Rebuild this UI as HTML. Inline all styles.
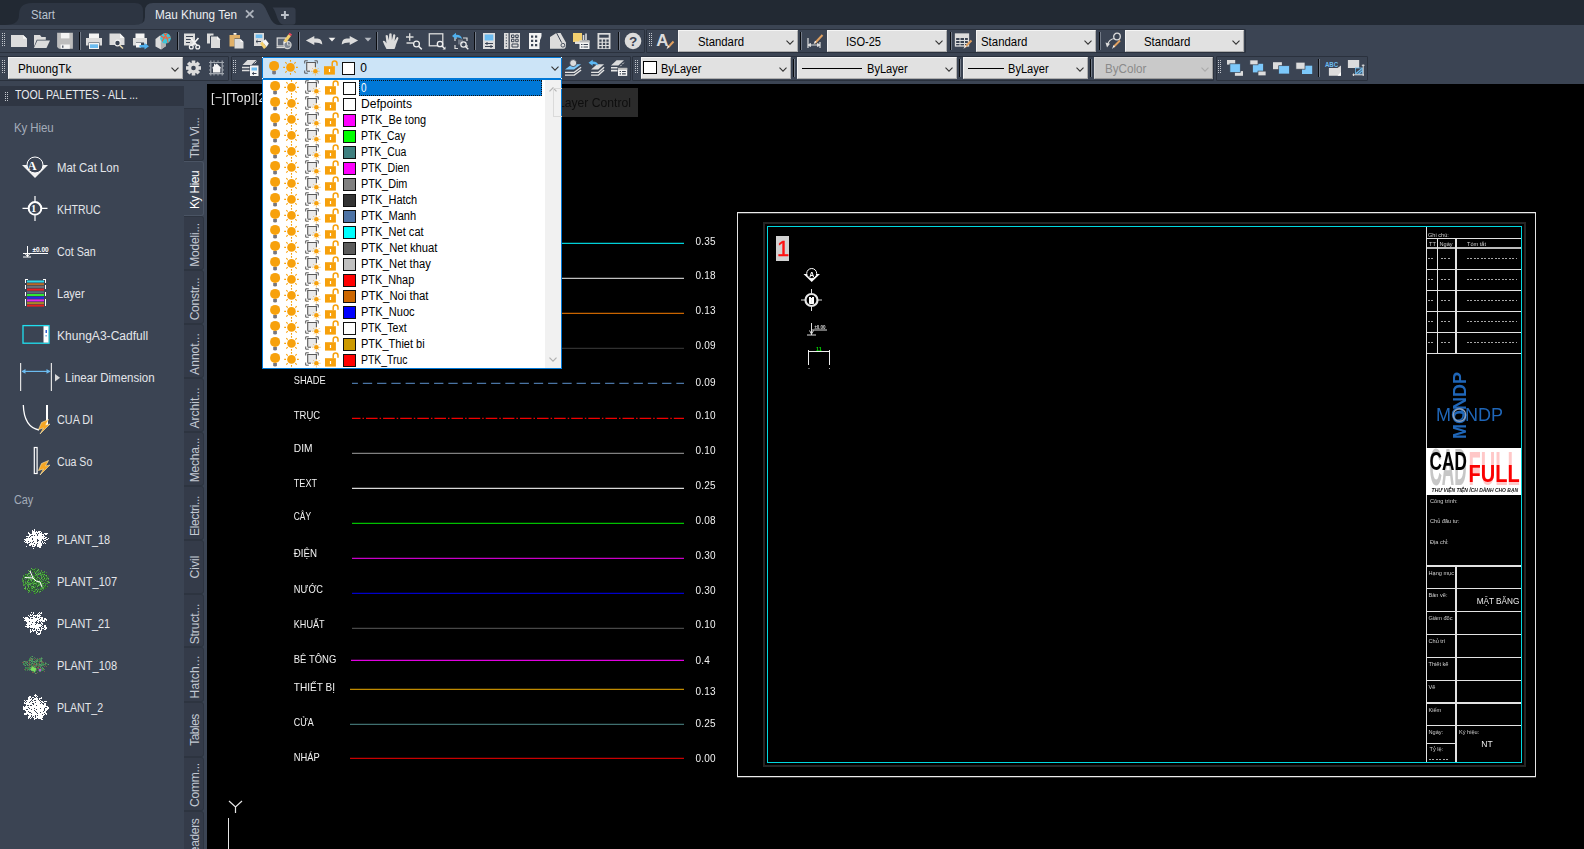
<!DOCTYPE html>
<html><head><meta charset="utf-8"><title>Mau Khung Ten</title>
<style>
*{box-sizing:border-box;margin:0;padding:0}
html,body{width:1584px;height:849px;overflow:hidden;background:#000;font-family:"Liberation Sans",sans-serif;font-size:12px;color:#e6e6e6}
.abs{position:absolute}
#tabbar{position:absolute;left:0;top:0;width:1584px;height:25px;background:#222933}
#tb{position:absolute;left:0;top:25px;width:1584px;height:59px;background:#3b4453}
.tab{position:absolute;top:3px;height:23px;border-radius:9px 9px 0 0;font-size:12px;line-height:23px;white-space:nowrap}
.grp{position:absolute;border:1px solid #2a313d;border-radius:1px}
.ic{position:absolute;width:18px;height:18px;overflow:visible}
.sep{position:absolute;background:#0a0c10;border-right:1px solid #737b88}
.grip{position:absolute;width:3px;height:15px;background-image:radial-gradient(circle,#c8ccd2 0.6px,transparent 0.9px);background-size:2px 2px}
.combo{position:absolute;height:22px;background:#e1e1e1;color:#000;font-size:12px;line-height:22px;white-space:nowrap;border:1px solid #f4f4f4;border-right-color:#adadad;border-bottom-color:#adadad}
.combo .chev{position:absolute;right:3px;top:8.5px;width:8px;height:5px}
#pal{position:absolute;left:0;top:84px;width:207px;height:765px;background:#3b4453}
#paltitle{position:absolute;left:0;top:2px;width:184px;height:20px;background:#2f3643;color:#e8eaee;font-size:12px;line-height:20px}
.pitem{position:absolute;left:56px;font-size:12px;color:#e4e6ea;white-space:nowrap;line-height:14px;margin-top:0.6px}
.phead{position:absolute;left:14px;font-size:12px;color:#a3acb9;line-height:14px;margin-top:1px;letter-spacing:-0.1px}
.vtab{position:absolute;left:184px;width:20px;background:#343b49;border-radius:0 3px 3px 0;border:1px solid #2d3440;border-left:none}
.vtab span{position:absolute;left:50%;top:50%;transform:translate(-50%,-50%) rotate(-90deg);white-space:nowrap;font-size:12px;color:#c3c9d3;margin-left:1.2px}
.vtab.act{background:#3b4453;border-color:#4a5464}
.vtab.act span{color:#fff}
#dd{position:absolute;left:262px;top:79px;width:300px;height:290px;background:#fff;border:1px solid #0078d7}
.lrow{position:absolute;left:0;width:280px;height:16px}
.lrow .t{position:absolute;left:98px;top:0;line-height:16px;font-size:12px;color:#000;white-space:nowrap}
.sw{position:absolute;left:80px;top:2px;width:13px;height:12.5px;border:1px solid #101010}
</style></head><body>

<div id="tabbar">
<svg class="abs" style="left:0;top:0" width="320" height="26" viewBox="0 0 320 26"><path d="M0 25 C12 25 19 24 19 15 C19 8 22 3 32 3 H135 Q143 3 143 11 V19 Q143 25 138 25 Z" fill="#2d3542"/><path d="M134 25 Q145 25 145 17 V11 Q145 3 153 3 H259 C268 3 268 25 279 25 Z" fill="#3b4453"/><path d="M272.5 7.6 H292.6 Q295.6 7.6 295.6 10.6 V21.7 Q295.6 24.7 292.6 24.7 H284 C277 24.7 277 12 272.5 7.6 Z" fill="#343c4a"/><path d="M246 10.4 L253.4 17.6 M253.4 10.4 L246 17.6" stroke="#adb3bc" stroke-width="1.9" fill="none"/><path d="M284.9 10.9 V18.9 M281 14.9 H288.8" stroke="#bcc1c9" stroke-width="2" fill="none"/></svg>
<div class="tab" style="left:31.4px;top:4px;color:#bcc4cf"><span style="display:inline-block;transform-origin:0 50%;transform:scaleX(0.939);white-space:nowrap">Start</span></div>
<div class="tab" style="left:154.5px;top:4px;color:#eceef1"><span style="display:inline-block;transform-origin:0 50%;transform:scaleX(0.979);white-space:nowrap">Mau Khung Ten</span></div>
</div>
<div id="tb">
<div class="grp" style="left:-1px;top:4px;width:646px;height:24px"></div>
<svg class="abs" style="left:2px;top:8px" width="3" height="13" viewBox="0 0 3 13" fill="#c4c8ce" shape-rendering="crispEdges"><rect x="0" y="0" width="1" height="1"/><rect x="2" y="0" width="1" height="1"/><rect x="0" y="2" width="1" height="1"/><rect x="2" y="2" width="1" height="1"/><rect x="0" y="4" width="1" height="1"/><rect x="2" y="4" width="1" height="1"/><rect x="0" y="6" width="1" height="1"/><rect x="2" y="6" width="1" height="1"/><rect x="0" y="8" width="1" height="1"/><rect x="2" y="8" width="1" height="1"/><rect x="0" y="10" width="1" height="1"/><rect x="2" y="10" width="1" height="1"/><rect x="0" y="12" width="1" height="1"/><rect x="2" y="12" width="1" height="1"/></svg>
<svg class="ic" style="left:10px;top:7px" viewBox="0 0 18 18"><path d="M1 3 H13.2 L17 6.8 V15 H1 Z" fill="#dcdcdc"/><path d="M13.2 3 V6.8 H17 Z" fill="#f8f8f8"/></svg>
<svg class="ic" style="left:33px;top:7px" viewBox="0 0 18 18"><path d="M1 3 H7 L8.5 5 H12.8 V7.8 H3.8 L1 14.5 Z" fill="#dcdcdc"/><path d="M4.3 8.5 H17 L13.5 15.9 H0.9 Z" fill="#dcdcdc"/></svg>
<svg class="ic" style="left:56px;top:7px" viewBox="0 0 18 18"><path d="M1.1 0.8 H16.9 V16.8 H3 L1.1 15 Z" fill="#bdbdbd"/><rect x="4.9" y="1" width="8.5" height="5.4" fill="#f4f4f4"/><rect x="4.6" y="12.5" width="9.2" height="4.3" fill="#f4f4f4"/><rect x="6.2" y="13.5" width="1.2" height="2.3" fill="#3b4453"/></svg>
<div class="sep" style="left:79px;top:7px;height:18px;width:2px"></div>
<svg class="ic" style="left:85px;top:7px" viewBox="0 0 18 18"><rect x="4" y="1.5" width="10" height="5" fill="#f4f4f4"/><path d="M1 6 H17 V13.5 H14.5 V10.5 H3.5 V13.5 H1 Z" fill="#dcdcdc"/><rect x="4" y="11" width="10" height="6" fill="#f4f4f4"/><rect x="5" y="12.3" width="8" height="3.7" fill="#6cbcf0"/></svg>
<svg class="ic" style="left:108px;top:7px" viewBox="0 0 18 18"><path d="M1.5 1.5 H12 L16.5 6 V13 H1.5 Z" fill="#dcdcdc"/><path d="M12 1.5 V6 H16.5 Z" fill="#f6f6f6"/><circle cx="9.5" cy="11" r="2.8" fill="#3b4453" stroke="#f0f0f0" stroke-width="1.2"/><path d="M11.7 13.2 L15 16.6" stroke="#e8d9b0" stroke-width="1.5"/></svg>
<svg class="ic" style="left:131px;top:7px" viewBox="0 0 18 18"><rect x="4.5" y="1.5" width="9" height="5" fill="#f4f4f4"/><path d="M2 6 H16 V12.5 H13 V10.5 H5 V13.5 H2 Z" fill="#dcdcdc"/><rect x="5" y="11" width="5" height="4.5" fill="#f4f4f4"/><path d="M8.5 13 H13.5 V11 L18 14.2 L13.5 17.4 V15.4 H8.5 Z" fill="#4fb0ee"/></svg>
<svg class="ic" style="left:154px;top:7px" viewBox="0 0 18 18"><path d="M1.5 7 L6 3.5 L12 6 V14 L7 17.5 L1.5 14.5 Z" fill="#dcdcdc"/><path d="M6.8 10.5 L12 7.5 V14 L7 17.5 Z" fill="#b0b0b0"/><circle cx="11.5" cy="6.3" r="5.3" fill="#3ec6d8"/><path d="M7 4 Q11.5 8 16.5 5 M8 9.5 Q11 4 13 1.4 M10 1.4 Q14 6 14 11" stroke="#f0623e" stroke-width="1.1" fill="none"/></svg>
<div class="sep" style="left:177px;top:7px;height:18px;width:2px"></div>
<svg class="ic" style="left:183px;top:7px" viewBox="0 0 18 18"><rect x="1" y="1.5" width="11" height="12" fill="#dcdcdc"/><path d="M3 4.5 H10 M3 7.5 H8 M3 10.5 H7" stroke="#3b4453" stroke-width="1.2"/><path d="M7.5 6 L14.5 14 M15.5 6 L8.5 14" stroke="#f4f4f4" stroke-width="1.6"/><circle cx="8.3" cy="15" r="1.9" fill="none" stroke="#f4f4f4" stroke-width="1.3"/><circle cx="14.7" cy="15" r="1.9" fill="none" stroke="#f4f4f4" stroke-width="1.3"/></svg>
<svg class="ic" style="left:205px;top:7px" viewBox="0 0 18 18"><path d="M2 1.5 H8.5 V11.5 H2 Z" fill="#dcdcdc"/><path d="M5.5 4 H12 L15.5 7.5 V16.5 H5.5 Z" fill="#dcdcdc" stroke="#3b4453" stroke-width="1"/><path d="M12 4 V7.5 H15.5 Z" fill="#f8f8f8"/></svg>
<svg class="ic" style="left:228px;top:7px" viewBox="0 0 18 18"><path d="M1.5 3 H5.5 Q7 0.5 8.5 3 H12 V6.5 H6.5 V14.5 H1.5 Z" fill="#e0b068"/><path d="M6.5 7 H12.5 L15.5 10 V16.5 H6.5 Z" fill="#dcdcdc"/><path d="M12.5 7 V10 H15.5 Z" fill="#f8f8f8"/><rect x="5.5" y="1" width="3" height="1.6" fill="#f4f4f4"/></svg>
<svg class="ic" style="left:252px;top:7px" viewBox="0 0 18 18"><rect x="2" y="1" width="10" height="13" fill="#dcdcdc"/><rect x="3.7" y="2.5" width="6.6" height="3.6" fill="#6cbcf0"/><path d="M4 9.5 H9 M4 9.5 l1.6 -1.4 M4 9.5 l1.6 1.4" stroke="#3b4453" stroke-width="1"/><path d="M8 11.5 L10.5 9.5 L14.5 15 L12 17 Z" fill="#f3cf6e"/><path d="M10.5 9.5 L13.5 7.2 L16.8 11.5 L14.5 15 Z" fill="#f6f6f6"/></svg>
<svg class="ic" style="left:275px;top:7px" viewBox="0 0 18 18"><path d="M1.5 15.5 H12" stroke="#dcdcdc" stroke-width="1.3"/><rect x="2.2" y="6" width="8.5" height="8" fill="#5a6270" stroke="#dcdcdc" stroke-width="1.2"/><circle cx="12.5" cy="13" r="3.6" fill="#7d8591" stroke="#cfcfcf" stroke-width="1.2"/><path d="M12.5 13 V9.5 M12.5 13 H16" stroke="#cfcfcf" stroke-width="1"/><path d="M8.5 9 L13.5 2.2 L16 4 L11 10.8 Z" fill="#f3cf6e"/><path d="M13.5 2.2 L14.6 0.7 L17 2.6 L16 4 Z" fill="#f0455a"/><path d="M8.5 9 L8.2 11.8 L11 10.8 Z" fill="#eee"/></svg>
<div class="sep" style="left:298px;top:7px;height:18px;width:2px"></div>
<svg class="ic" style="left:305px;top:7px" viewBox="0 0 18 18"><path d="M0.9 8.5 L9.3 4 V6.6 H12.5 Q17 6.8 17.3 12.5 Q14.5 10.3 9.3 10.4 V13 Z" fill="#dcdcdc"/></svg>
<svg class="ic" style="left:323px;top:7px" viewBox="0 0 18 18"><path d="M5.6 5.7 H12.4 L9 9.6 Z" fill="#f0f0f0"/></svg>
<svg class="ic" style="left:341px;top:7px" viewBox="0 0 18 18"><path d="M17.1 8.5 L8.7 4 V6.6 H5.5 Q1 6.8 0.7 12.5 Q3.5 10.3 8.7 10.4 V13 Z" fill="#dcdcdc"/></svg>
<svg class="ic" style="left:359px;top:7px" viewBox="0 0 18 18"><path d="M5.6 5.7 H12.4 L9 9.6 Z" fill="#b4b9c0"/></svg>
<div class="sep" style="left:376px;top:7px;height:18px;width:2px"></div>
<svg class="ic" style="left:382px;top:7px" viewBox="0 0 18 18"><path d="M4.5 17 Q2 12.5 0.8 9.2 Q1.8 8 3.2 9.6 L4.5 11.5 L3.6 3.6 Q4.8 2.2 5.8 3.6 L6.8 8.3 L7.3 1.8 Q8.6 0.6 9.6 1.8 L9.9 8.3 L11.3 2.6 Q12.8 1.8 13.4 3.2 L12.6 9 L14.8 5.2 Q16.3 4.8 16.4 6.4 L14 12.5 Q13.5 15 12.5 17 Z" fill="#dcdcdc"/></svg>
<svg class="ic" style="left:405px;top:7px" viewBox="0 0 18 18"><path d="M1 5 H8.5 M4.7 1.2 V8.8 M1.5 11 H8" stroke="#dcdcdc" stroke-width="1.4"/><circle cx="11.5" cy="12" r="2.9" fill="none" stroke="#f0f0f0" stroke-width="1.3"/><path d="M13.6 14.2 L16.8 17.4" stroke="#f0f0f0" stroke-width="1.5"/></svg>
<svg class="ic" style="left:428px;top:7px" viewBox="0 0 18 18"><rect x="1.3" y="1.8" width="13.5" height="12" fill="none" stroke="#dcdcdc" stroke-width="1.3"/><circle cx="12" cy="12" r="2.7" fill="#3b4453" stroke="#f0f0f0" stroke-width="1.3"/><path d="M14 14 L16 16" stroke="#f0f0f0" stroke-width="1.5"/><path d="M17.5 14.5 V17.5 H14.5 Z" fill="#f0f0f0"/></svg>
<svg class="ic" style="left:451px;top:7px" viewBox="0 0 18 18"><path d="M6 6 H4 V9 M12 6 H16 V9 M4 13 V16.5 H7 M16 13 V15" stroke="#dcdcdc" stroke-width="1.2" fill="none"/><rect x="7" y="7.5" width="5" height="5" fill="#6b7380"/><path d="M1 4 L5 0.8 V2.8 Q10 2.5 11 7 Q8.5 5 5 5.2 V7.2 Z" fill="#4fb0ee"/><circle cx="12.5" cy="12.5" r="2.7" fill="none" stroke="#f0f0f0" stroke-width="1.2"/><path d="M14.5 14.5 L17.3 17.3" stroke="#f0f0f0" stroke-width="1.4"/></svg>
<div class="sep" style="left:474px;top:7px;height:18px;width:2px"></div>
<svg class="ic" style="left:480px;top:7px" viewBox="0 0 18 18"><rect x="3" y="1" width="12" height="16" fill="#dcdcdc"/><rect x="4.7" y="2.5" width="8.6" height="6" fill="#6cbcf0"/><path d="M5 11.5 H13 M5 14.5 H13" stroke="#3b4453" stroke-width="1"/><path d="M7 10.3 V12.7 M11 13.3 V15.7" stroke="#3b4453" stroke-width="1.4"/></svg>
<svg class="ic" style="left:503px;top:7px" viewBox="0 0 18 18"><rect x="1" y="1" width="4.5" height="16" fill="#dcdcdc"/><path d="M3.3 2.5 V16" stroke="#3b4453" stroke-width="1" stroke-dasharray="1.2 1.6"/><rect x="6.8" y="1" width="10.2" height="16" fill="#dcdcdc"/><path d="M8.5 3 h2.5 v2.5 h-2.5 Z M12.7 3 h2.5 v2.5 h-2.5 Z M8.5 7.2 h2.5 v2.5 h-2.5 Z M12.7 7.2 h2.5 v2.5 h-2.5 Z M9 12 h6 v3 h-6 Z" fill="none" stroke="#3b4453" stroke-width="1"/></svg>
<svg class="ic" style="left:526px;top:7px" viewBox="0 0 18 18"><path d="M3 1 H15.5 V7 L13.5 11 V17 H3 Z" fill="#f2f2f2"/><path d="M5 3.5 h2.2 v2.2 h-2.2 Z M9 3.5 h2.2 v2.2 h-2.2 Z M5 7.7 h2.2 v2.2 h-2.2 Z M9 7.7 h2.2 v2.2 h-2.2 Z M5 12 h2.2 v2.2 h-2.2 Z M9 12 h2.2 v2.2 h-2.2 Z" fill="#3b4453"/><path d="M14 8 L16 4 V10 L14 11.5 Z" fill="#3b4453"/></svg>
<svg class="ic" style="left:549px;top:7px" viewBox="0 0 18 18"><path d="M1 16.8 V5.1 L7.4 0.9 H11.6 L16.9 10.4 Q17.6 16.8 14.5 16.8 Z" fill="#dcdcdc"/><path d="M7.6 1 L12.6 10.6" stroke="#3b4453" stroke-width="1"/><circle cx="13.9" cy="13.2" r="1.9" fill="none" stroke="#3b4453" stroke-width="0.9"/></svg>
<svg class="ic" style="left:572px;top:7px" viewBox="0 0 18 18"><rect x="1" y="1" width="9" height="9" fill="#f3cf6e"/><path d="M11.5 3 V8 M14 1.5 V8" stroke="#dcdcdc" stroke-width="1.6"/><path d="M3 9.5 H8 V12 H3 Z" fill="#dcdcdc"/><rect x="7.5" y="8.5" width="10" height="8.5" fill="#f4f4f4"/><rect x="7.5" y="8.5" width="10" height="2" fill="#bdbdbd"/><path d="M9 12.5 h1.5 M11.5 12.5 h4.5 M9 15 h1.5 M11.5 15 h4.5" stroke="#3b4453" stroke-width="1.1"/></svg>
<svg class="ic" style="left:595px;top:7px" viewBox="0 0 18 18"><rect x="2.5" y="1" width="13" height="16" fill="#dcdcdc"/><rect x="4.3" y="2.7" width="9.4" height="3" fill="#3b4453"/><path d="M4.3 7.5 h2.3 v2.2 h-2.3 Z M7.9 7.5 h2.3 v2.2 h-2.3 Z M11.4 7.5 h2.3 v2.2 h-2.3 Z M4.3 10.8 h2.3 v2.2 h-2.3 Z M7.9 10.8 h2.3 v2.2 h-2.3 Z M11.4 10.8 h2.3 v2.2 h-2.3 Z M4.3 14 h2.3 v2.2 h-2.3 Z M7.9 14 h2.3 v2.2 h-2.3 Z M11.4 14 h2.3 v2.2 h-2.3 Z" fill="#3b4453"/></svg>
<div class="sep" style="left:618px;top:7px;height:18px;width:2px"></div>
<svg class="ic" style="left:624px;top:7px" viewBox="0 0 18 18"><circle cx="9" cy="9" r="8.3" fill="#dcdcdc"/><text x="9" y="13.8" font-family="Liberation Sans, sans-serif" font-weight="bold" font-size="13.5" text-anchor="middle" fill="#3b4453">?</text></svg>
<div class="grp" style="left:646px;top:4px;width:600px;height:24px"></div>
<svg class="abs" style="left:649px;top:8px" width="3" height="13" viewBox="0 0 3 13" fill="#c4c8ce" shape-rendering="crispEdges"><rect x="0" y="0" width="1" height="1"/><rect x="2" y="0" width="1" height="1"/><rect x="0" y="2" width="1" height="1"/><rect x="2" y="2" width="1" height="1"/><rect x="0" y="4" width="1" height="1"/><rect x="2" y="4" width="1" height="1"/><rect x="0" y="6" width="1" height="1"/><rect x="2" y="6" width="1" height="1"/><rect x="0" y="8" width="1" height="1"/><rect x="2" y="8" width="1" height="1"/><rect x="0" y="10" width="1" height="1"/><rect x="2" y="10" width="1" height="1"/><rect x="0" y="12" width="1" height="1"/><rect x="2" y="12" width="1" height="1"/></svg>
<svg class="ic" style="left:656px;top:7px" viewBox="0 0 18 18"><text x="6.5" y="14" font-family="Liberation Sans, sans-serif" font-weight="bold" font-size="17" text-anchor="middle" fill="#dcdcdc">A</text><path d="M12 15.5 L17.5 9.5" stroke="#e0a060" stroke-width="2"/><path d="M10.5 17.5 L13.5 14.5 L12 13.5 Z" fill="#f4f4f4"/></svg>
<div class="combo" style="left:678px;top:5px;width:120px;"><span class="abs" style="left:18.600000000000023px;top:0"><span style="display:inline-block;transform-origin:0 50%;transform:scaleX(0.944);white-space:nowrap">Standard</span></span><svg class="chev" viewBox="0 0 8 5"><path d="M0.5 0.6 L4 4.1 L7.5 0.6" stroke="#333" stroke-width="1.1" fill="none"/></svg></div>
<div class="sep" style="left:800px;top:7px;height:18px;width:2px"></div>
<svg class="ic" style="left:806px;top:7px" viewBox="0 0 18 18"><path d="M2 6 V16 M14 10 V16" stroke="#dcdcdc" stroke-width="1.2"/><path d="M2 13 H14 M2 13 l2.5 -1.5 v3 Z M14 13 l-2.5 -1.5 v3 Z" stroke="#dcdcdc" stroke-width="1" fill="#dcdcdc"/><path d="M9 11 L16.5 3" stroke="#e0a060" stroke-width="2"/><path d="M7.5 12.5 L10.5 9.8 L9 8.8 Z" fill="#f4f4f4"/></svg>
<div class="combo" style="left:827px;top:5px;width:120px;"><span class="abs" style="left:18px;top:0"><span style="display:inline-block;transform-origin:0 50%;transform:scaleX(0.921);white-space:nowrap">ISO-25</span></span><svg class="chev" viewBox="0 0 8 5"><path d="M0.5 0.6 L4 4.1 L7.5 0.6" stroke="#333" stroke-width="1.1" fill="none"/></svg></div>
<div class="sep" style="left:950px;top:7px;height:18px;width:2px"></div>
<svg class="ic" style="left:954px;top:7px" viewBox="0 0 18 18"><rect x="1.5" y="2" width="13" height="12" fill="none" stroke="#dcdcdc" stroke-width="1.3"/><path d="M1.5 5.5 H14.5 M1.5 8.5 H14.5 M1.5 11.5 H14.5 M6 5.5 V14 M10.5 5.5 V14" stroke="#dcdcdc" stroke-width="1"/><rect x="1.5" y="2" width="13" height="3.5" fill="#dcdcdc"/><path d="M11 15 L17.5 8.5" stroke="#e0a060" stroke-width="2"/><path d="M9.5 17 L12.5 14.2 L11 13.2 Z" fill="#f4f4f4"/></svg>
<div class="combo" style="left:976px;top:5px;width:120px;"><span class="abs" style="left:4.399999999999977px;top:0"><span style="display:inline-block;transform-origin:0 50%;transform:scaleX(0.951);white-space:nowrap">Standard</span></span><svg class="chev" viewBox="0 0 8 5"><path d="M0.5 0.6 L4 4.1 L7.5 0.6" stroke="#333" stroke-width="1.1" fill="none"/></svg></div>
<div class="sep" style="left:1099px;top:7px;height:18px;width:2px"></div>
<svg class="ic" style="left:1104px;top:7px" viewBox="0 0 18 18"><circle cx="13" cy="4.5" r="3.3" fill="none" stroke="#dcdcdc" stroke-width="1.3"/><path d="M10.5 6.5 Q5 7 3.5 13" stroke="#dcdcdc" stroke-width="1.2" fill="none"/><path d="M1.5 10.5 L3 15.5 L6 11.8 Z" fill="#dcdcdc"/><path d="M9.5 15 L16 8.5" stroke="#e0a060" stroke-width="2"/><path d="M8 17 L11 14.2 L9.5 13.2 Z" fill="#f4f4f4"/></svg>
<div class="combo" style="left:1125px;top:5px;width:119px;"><span class="abs" style="left:18px;top:0"><span style="display:inline-block;transform-origin:0 50%;transform:scaleX(0.951);white-space:nowrap">Standard</span></span><svg class="chev" viewBox="0 0 8 5"><path d="M0.5 0.6 L4 4.1 L7.5 0.6" stroke="#333" stroke-width="1.1" fill="none"/></svg></div>
<div class="grp" style="left:-1px;top:31px;width:230px;height:25px"></div>
<svg class="abs" style="left:2px;top:35px" width="3" height="13" viewBox="0 0 3 13" fill="#c4c8ce" shape-rendering="crispEdges"><rect x="0" y="0" width="1" height="1"/><rect x="2" y="0" width="1" height="1"/><rect x="0" y="2" width="1" height="1"/><rect x="2" y="2" width="1" height="1"/><rect x="0" y="4" width="1" height="1"/><rect x="2" y="4" width="1" height="1"/><rect x="0" y="6" width="1" height="1"/><rect x="2" y="6" width="1" height="1"/><rect x="0" y="8" width="1" height="1"/><rect x="2" y="8" width="1" height="1"/><rect x="0" y="10" width="1" height="1"/><rect x="2" y="10" width="1" height="1"/><rect x="0" y="12" width="1" height="1"/><rect x="2" y="12" width="1" height="1"/></svg>
<div class="combo" style="left:8px;top:32px;width:175px;"><span class="abs" style="left:8.5px;top:0"><span style="display:inline-block;transform-origin:0 50%;transform:scaleX(0.974);white-space:nowrap">PhuongTk</span></span><svg class="chev" viewBox="0 0 8 5"><path d="M0.5 0.6 L4 4.1 L7.5 0.6" stroke="#333" stroke-width="1.1" fill="none"/></svg></div>
<svg class="ic" style="left:184px;top:34px" viewBox="0 0 18 18"><g fill="#dcdcdc"><circle cx="9.5" cy="9" r="5.4"/><rect x="7.7" y="1.5" width="3.6" height="4" transform="rotate(0 9.5 9)"/><rect x="7.7" y="1.5" width="3.6" height="4" transform="rotate(45 9.5 9)"/><rect x="7.7" y="1.5" width="3.6" height="4" transform="rotate(90 9.5 9)"/><rect x="7.7" y="1.5" width="3.6" height="4" transform="rotate(135 9.5 9)"/><rect x="7.7" y="1.5" width="3.6" height="4" transform="rotate(180 9.5 9)"/><rect x="7.7" y="1.5" width="3.6" height="4" transform="rotate(225 9.5 9)"/><rect x="7.7" y="1.5" width="3.6" height="4" transform="rotate(270 9.5 9)"/><rect x="7.7" y="1.5" width="3.6" height="4" transform="rotate(315 9.5 9)"/></g><circle cx="9.5" cy="9" r="2.3" fill="#3b4453"/></svg>
<svg class="ic" style="left:207px;top:34px" viewBox="0 0 18 18"><path d="M3.8 1.5 V16.5 M15.2 1.5 V16.5 M2 3.5 H17 M2 14.7 H17" stroke="#a0a6ae" stroke-width="1.2"/><path d="M7 1.5 V3.5 M11 1.5 V3.5 M7 14.7 V16.5 M11 14.7 V16.5 M2 7 H3.8 M2 11 H3.8 M15.2 7 H17 M15.2 11 H17" stroke="#a0a6ae" stroke-width="1"/><path d="M4.8 9.2 L7 7 V4.8 H8.2 V6 L9.8 4.5 L14.5 9.2 H13.3 V13.6 H6 V9.2 Z" fill="#f4f4f4"/></svg>
<div class="grp" style="left:231px;top:31px;width:400px;height:25px"></div>
<svg class="abs" style="left:233px;top:35px" width="3" height="13" viewBox="0 0 3 13" fill="#c4c8ce" shape-rendering="crispEdges"><rect x="0" y="0" width="1" height="1"/><rect x="2" y="0" width="1" height="1"/><rect x="0" y="2" width="1" height="1"/><rect x="2" y="2" width="1" height="1"/><rect x="0" y="4" width="1" height="1"/><rect x="2" y="4" width="1" height="1"/><rect x="0" y="6" width="1" height="1"/><rect x="2" y="6" width="1" height="1"/><rect x="0" y="8" width="1" height="1"/><rect x="2" y="8" width="1" height="1"/><rect x="0" y="10" width="1" height="1"/><rect x="2" y="10" width="1" height="1"/><rect x="0" y="12" width="1" height="1"/><rect x="2" y="12" width="1" height="1"/></svg>
<svg class="ic" style="left:241px;top:34px" viewBox="0 0 18 18"><path d="M6.5 1 H15.5 L10.5 6 H1.5 Z" fill="#dcdcdc"/><path d="M1 8.5 H8.5 M1 11.5 H8.5" stroke="#dcdcdc" stroke-width="1.4"/><path d="M13.5 4.5 L15.5 2.5" stroke="#dcdcdc" stroke-width="1"/><rect x="9" y="6.5" width="8.5" height="10.5" fill="#f4f4f4"/><rect x="10.5" y="8.5" width="5.5" height="3" fill="#6cbcf0"/><path d="M11.3 14.5 H15.5 M11.3 14.5 l1.5 -1.3 M11.3 14.5 l1.5 1.3" stroke="#3b4453" stroke-width="1"/></svg>
<svg class="ic" style="left:565px;top:34px" viewBox="0 0 18 18"><path d="M0 10.6 L7 5.2 H16.1 L9 10.6 Z" fill="#7cc8fa"/><circle cx="8.2" cy="4.1" r="3.5" fill="#dcdcdc" stroke="#3b4453" stroke-width="0.8"/><path d="M0 13.3 H9.3 L16.1 8.2 M0 16.1 H9.3 L16.1 11" stroke="#e4e4e4" stroke-width="1.35" fill="none"/></svg>
<svg class="ic" style="left:588px;top:34px" viewBox="0 0 18 18"><path d="M3.1 10.6 L9 5.2 H16.1 L10.2 10.6 Z" fill="#dcdcdc"/><path d="M3.1 13.3 H10.5 L16.1 8.2 M3.1 16.1 H10.5 L16.1 11" stroke="#e4e4e4" stroke-width="1.35" fill="none"/><path d="M0.5 3.8 L4.7 0.8 V2.6 Q9.5 2.4 10.4 6.6 Q8 5 4.7 5.1 V6.8 Z" fill="#5cb8f4"/></svg>
<svg class="ic" style="left:610px;top:34px" viewBox="0 0 18 18"><path d="M1 6.6 L6.6 1.3 H14 L8.4 6.6 Z" fill="#dcdcdc"/><path d="M1 8.8 H7.5 M1 11.6 H7.5" stroke="#e4e4e4" stroke-width="1.6"/><path d="M10.3 7.2 L14 3.5" stroke="#dcdcdc" stroke-width="1" stroke-dasharray="2 1"/><rect x="8" y="8.9" width="9.2" height="8" fill="#f6f6f6"/><rect x="8" y="8.9" width="9.2" height="1.9" fill="#bdbdbd"/><path d="M9.6 12.5 h1.4 M12 12.5 h3.8 M9.6 14.9 h1.4 M12 14.9 h3.8" stroke="#3b4453" stroke-width="1.1"/></svg>
<div class="grp" style="left:632px;top:31px;width:582px;height:25px"></div>
<svg class="abs" style="left:635px;top:35px" width="3" height="13" viewBox="0 0 3 13" fill="#c4c8ce" shape-rendering="crispEdges"><rect x="0" y="0" width="1" height="1"/><rect x="2" y="0" width="1" height="1"/><rect x="0" y="2" width="1" height="1"/><rect x="2" y="2" width="1" height="1"/><rect x="0" y="4" width="1" height="1"/><rect x="2" y="4" width="1" height="1"/><rect x="0" y="6" width="1" height="1"/><rect x="2" y="6" width="1" height="1"/><rect x="0" y="8" width="1" height="1"/><rect x="2" y="8" width="1" height="1"/><rect x="0" y="10" width="1" height="1"/><rect x="2" y="10" width="1" height="1"/><rect x="0" y="12" width="1" height="1"/><rect x="2" y="12" width="1" height="1"/></svg>
<div class="combo" style="left:641px;top:32px;width:150px;"><span class="abs" style="left:1px;top:3.4px;width:14px;height:13px;background:#fff;border:1px solid #000"></span><span class="abs" style="left:19.299999999999955px;top:0"><span style="display:inline-block;transform-origin:0 50%;transform:scaleX(0.918);white-space:nowrap">ByLayer</span></span><svg class="chev" viewBox="0 0 8 5"><path d="M0.5 0.6 L4 4.1 L7.5 0.6" stroke="#333" stroke-width="1.1" fill="none"/></svg></div>
<div class="sep" style="left:793px;top:34px;height:18px;width:2px"></div>
<div class="combo" style="left:797px;top:32px;width:160px;"><span class="abs" style="left:4px;top:10px;width:60px;height:1px;background:#000"></span><span class="abs" style="left:69.29999999999995px;top:0"><span style="display:inline-block;transform-origin:0 50%;transform:scaleX(0.922);white-space:nowrap">ByLayer</span></span><svg class="chev" viewBox="0 0 8 5"><path d="M0.5 0.6 L4 4.1 L7.5 0.6" stroke="#333" stroke-width="1.1" fill="none"/></svg></div>
<div class="sep" style="left:959px;top:34px;height:18px;width:2px"></div>
<div class="combo" style="left:963px;top:32px;width:125px;"><span class="abs" style="left:4px;top:10px;width:36px;height:1px;background:#000"></span><span class="abs" style="left:44.299999999999955px;top:0"><span style="display:inline-block;transform-origin:0 50%;transform:scaleX(0.922);white-space:nowrap">ByLayer</span></span><svg class="chev" viewBox="0 0 8 5"><path d="M0.5 0.6 L4 4.1 L7.5 0.6" stroke="#333" stroke-width="1.1" fill="none"/></svg></div>
<div class="sep" style="left:1090px;top:34px;height:18px;width:2px"></div>
<div class="combo" style="left:1094px;top:32px;width:119px;background:#c9c9c9;color:#8a8a8a;border-color:#d8d8d8 #9a9a9a #9a9a9a #d8d8d8"><span class="abs" style="left:9.599999999999909px;top:0"><span style="display:inline-block;transform-origin:0 50%;transform:scaleX(0.970);white-space:nowrap">ByColor</span></span><svg class="chev" viewBox="0 0 8 5"><path d="M0.5 0.6 L4 4.1 L7.5 0.6" stroke="#aaa" stroke-width="1.1" fill="none"/></svg></div>
<div class="grp" style="left:1216px;top:31px;width:152px;height:25px"></div>
<svg class="abs" style="left:1218px;top:35px" width="3" height="13" viewBox="0 0 3 13" fill="#c4c8ce" shape-rendering="crispEdges"><rect x="0" y="0" width="1" height="1"/><rect x="2" y="0" width="1" height="1"/><rect x="0" y="2" width="1" height="1"/><rect x="2" y="2" width="1" height="1"/><rect x="0" y="4" width="1" height="1"/><rect x="2" y="4" width="1" height="1"/><rect x="0" y="6" width="1" height="1"/><rect x="2" y="6" width="1" height="1"/><rect x="0" y="8" width="1" height="1"/><rect x="2" y="8" width="1" height="1"/><rect x="0" y="10" width="1" height="1"/><rect x="2" y="10" width="1" height="1"/><rect x="0" y="12" width="1" height="1"/><rect x="2" y="12" width="1" height="1"/></svg>
<svg class="ic" style="left:1226px;top:34px" viewBox="0 0 18 18"><rect x="1" y="1" width="8.2" height="4.6" fill="#dcdcdc"/><rect x="8.9" y="12.1" width="8.1" height="4.7" fill="#dcdcdc"/><rect x="3.9" y="4.8" width="10.4" height="8.6" fill="#7cc8fa" stroke="#3b4453" stroke-width="0.7"/></svg>
<svg class="ic" style="left:1249px;top:34px" viewBox="0 0 18 18"><rect x="3.9" y="4.8" width="10.2" height="8.6" fill="#7cc8fa"/><rect x="0.9" y="1" width="8.1" height="4.8" fill="#dcdcdc" stroke="#3b4453" stroke-width="0.7"/><rect x="9" y="12.1" width="8" height="4.7" fill="#dcdcdc" stroke="#3b4453" stroke-width="0.7"/></svg>
<svg class="ic" style="left:1272px;top:34px" viewBox="0 0 18 18"><rect x="1" y="3.2" width="8.9" height="7" fill="#dcdcdc"/><rect x="6.7" y="6.7" width="10.7" height="8.3" fill="#7cc8fa" stroke="#3b4453" stroke-width="0.7"/></svg>
<svg class="ic" style="left:1295px;top:34px" viewBox="0 0 18 18"><rect x="7" y="6.7" width="10.2" height="8.3" fill="#7cc8fa"/><rect x="0.9" y="3.2" width="9.1" height="7" fill="#dcdcdc" stroke="#3b4453" stroke-width="0.7"/></svg>
<div class="sep" style="left:1318px;top:34px;height:18px;width:2px"></div>
<svg class="ic" style="left:1324px;top:34px" viewBox="0 0 18 18"><path d="M4.9 9 H13.5 L17 6.4 V16.8 H4.9 Z" fill="#dcdcdc"/><path d="M17 13 V16.8 H13.5 Z" fill="#fff"/><text x="7.5" y="7.6" font-family="Liberation Sans, sans-serif" font-weight="bold" font-size="6.3" text-anchor="middle" fill="#6cbcf0" textLength="13.2" lengthAdjust="spacingAndGlyphs">ABC</text></svg>
<svg class="ic" style="left:1347px;top:34px" viewBox="0 0 18 18"><rect x="0.9" y="1" width="11.3" height="8" fill="#dcdcdc"/><rect x="8.4" y="9" width="7" height="6" fill="none" stroke="#6cbcf0" stroke-width="0.8"/><path d="M9 14.5 L15 9.5 M11.5 15 L15.5 11.5" stroke="#6cbcf0" stroke-width="1.2"/><path d="M5.5 15.8 H17 M16.2 5.5 V17 M6.5 14.5 V17 M14.8 6.3 H17.5" stroke="#dcdcdc" stroke-width="1"/></svg>
</div>
<div id="pal">
<div id="paltitle"><svg class="abs" style="left:5px;top:5.5px" width="3" height="9" viewBox="0 0 3 9" fill="#c4c8ce" shape-rendering="crispEdges"><rect x="0" y="0" width="1" height="1"/><rect x="2" y="0" width="1" height="1"/><rect x="0" y="2" width="1" height="1"/><rect x="2" y="2" width="1" height="1"/><rect x="0" y="4" width="1" height="1"/><rect x="2" y="4" width="1" height="1"/><rect x="0" y="6" width="1" height="1"/><rect x="2" y="6" width="1" height="1"/><rect x="0" y="8" width="1" height="1"/><rect x="2" y="8" width="1" height="1"/></svg><span class="abs" style="left:15px;top:-1.5px;white-space:nowrap"><span style="display:inline-block;transform-origin:0 50%;transform:scaleX(0.878);white-space:nowrap">TOOL PALETTES - ALL ...</span></span></div>
<div class="phead" style="top:36px"><span style="display:inline-block;transform-origin:0 50%;transform:scaleX(0.959);white-space:nowrap">Ky Hieu</span></div>
<div class="pitem" style="left:56.5px;top:76px"><span style="display:inline-block;transform-origin:0 50%;transform:scaleX(0.948);white-space:nowrap">Mat Cat Lon</span></div>
<svg class="abs" style="left:17px;top:65px;overflow:visible" width="36" height="36" viewBox="0 0 36 36"><path d="M5 16 H31 L18 29 Z" fill="#f2f2f2"/><circle cx="18" cy="16" r="8" fill="#3b4453" stroke="#ffffff" stroke-width="1"/><text x="15" y="20.5" font-family="Liberation Serif, serif" font-weight="bold" font-size="12.5" text-anchor="middle" fill="#ffffff">A</text></svg>
<div class="pitem" style="left:56.5px;top:118px"><span style="display:inline-block;transform-origin:0 50%;transform:scaleX(0.874);white-space:nowrap">KHTRUC</span></div>
<svg class="abs" style="left:17px;top:107px;overflow:visible" width="36" height="36" viewBox="0 0 36 36"><circle cx="18" cy="17.4" r="6.3" fill="none" stroke="#ffffff" stroke-width="2"/><path d="M18 5 V10.5 M18 24.5 V30 M5.5 17.4 H11 M25 17.4 H30.5" stroke="#ffffff" stroke-width="1.2"/><text x="16.5" y="21.3" font-family="Liberation Serif, serif" font-weight="bold" font-size="10.5" text-anchor="middle" fill="#ffffff">1</text></svg>
<div class="pitem" style="left:56.5px;top:160px"><span style="display:inline-block;transform-origin:0 50%;transform:scaleX(0.893);white-space:nowrap">Cot San</span></div>
<svg class="abs" style="left:17px;top:149px;overflow:visible" width="36" height="36" viewBox="0 0 36 36"><path d="M6 24 H14 M10.5 13 V24 M6 20.5 H31 M10.5 23.5 l-2.5 -3 M10.5 23.5 l2.5 -3" stroke="#ffffff" stroke-width="1" fill="none"/><text x="23.5" y="19" font-family="Liberation Sans, sans-serif" font-weight="bold" font-size="6.5" text-anchor="middle" fill="#ffffff">±0.00</text></svg>
<div class="pitem" style="left:56.5px;top:202px"><span style="display:inline-block;transform-origin:0 50%;transform:scaleX(0.919);white-space:nowrap">Layer</span></div>
<svg class="abs" style="left:17px;top:191px;overflow:visible" width="36" height="36" viewBox="0 0 36 36"><path d="M8.5 4 V8 M8.5 10 V14 M8.5 17 V21 M8.5 24 V31 M28.5 4 V8 M28.5 10 V14 M28.5 17 V21 M28.5 24 V31 M8 4.5 H11 M26 4.5 H29" stroke="#ffffff" stroke-width="1"/><rect x="10" y="5.5" width="17" height="2" fill="#30d8e8"/><rect x="10" y="8.2" width="17" height="2" fill="#b86828"/><rect x="10" y="10.9" width="17" height="2" fill="#6a7078"/><rect x="10" y="13.6" width="17" height="2" fill="#e82020"/><rect x="10" y="16.3" width="17" height="2" fill="#5a6a80"/><rect x="10" y="19" width="17" height="2" fill="#30e830"/><rect x="10" y="21.7" width="17" height="2" fill="#2828e8"/><rect x="10" y="24.4" width="17" height="2" fill="#e828e8"/><rect x="10" y="27.1" width="17" height="2" fill="#a88828"/><rect x="10" y="29.6" width="17" height="2" fill="#e82020"/></svg>
<div class="pitem" style="left:56.5px;top:244px"><span style="display:inline-block;transform-origin:0 50%;transform:scaleX(1.005);white-space:nowrap">KhungA3-Cadfull</span></div>
<svg class="abs" style="left:17px;top:233px;overflow:visible" width="36" height="36" viewBox="0 0 36 36"><rect x="6" y="8.6" width="26" height="17.6" fill="none" stroke="#20e0f0" stroke-width="1.3"/><rect x="26.5" y="9.2" width="5" height="16.4" fill="#ffffff"/><rect x="28.5" y="13" width="1.5" height="3" fill="#3060d0"/><rect x="28.5" y="18" width="1.2" height="1.5" fill="#50a0e0"/></svg>
<div class="pitem" style="left:65.4px;top:286px"><span style="display:inline-block;transform-origin:0 50%;transform:scaleX(0.960);white-space:nowrap">Linear Dimension</span></div>
<svg class="abs" style="left:17px;top:275px;overflow:visible" width="36" height="36" viewBox="0 0 36 36"><path d="M3.6 4 V32 M34.4 4 V32" stroke="#e0e0e0" stroke-width="1.2"/><path d="M5 12.4 H33" stroke="#6cbcf0" stroke-width="1.2" fill="none"/><path d="M4.5 12.4 l4 -2.3 v4.6 Z M33.5 12.4 l-4 -2.3 v4.6 Z" fill="#6cbcf0"/><path d="M38 15 L43 18.8 L38 22.6 Z" fill="#d8d8d8"/></svg>
<div class="pitem" style="left:56.5px;top:328px"><span style="display:inline-block;transform-origin:0 50%;transform:scaleX(0.902);white-space:nowrap">CUA DI</span></div>
<svg class="abs" style="left:17px;top:317px;overflow:visible" width="36" height="36" viewBox="0 0 36 36"><path d="M6.3 4 Q7 26 22 29" stroke="#ffffff" stroke-width="1.3" fill="none"/><path d="M30 4 V24" stroke="#ffffff" stroke-width="2"/><path d="M24.5 21.5 L31.5 18.5 L28.5 24 L33 23 L23 33 L26.5 27 L21.5 28.5 Z" fill="#f5a623" stroke="#fde9b0" stroke-width="0.6"/></svg>
<div class="pitem" style="left:56.5px;top:370px"><span style="display:inline-block;transform-origin:0 50%;transform:scaleX(0.882);white-space:nowrap">Cua So</span></div>
<svg class="abs" style="left:17px;top:359px;overflow:visible" width="36" height="36" viewBox="0 0 36 36"><rect x="17.3" y="4.5" width="2.8" height="26" fill="none" stroke="#ffffff" stroke-width="1.2"/><path d="M24.5 20.5 L31.5 17.5 L28.5 23 L33 22 L23 32 L26.5 26 L21.5 27.5 Z" fill="#f5a623" stroke="#fde9b0" stroke-width="0.6"/></svg>
<div class="phead" style="top:408px"><span style="display:inline-block;transform-origin:0 50%;transform:scaleX(0.904);white-space:nowrap">Cay</span></div>
<div class="pitem" style="left:56.6px;top:448px"><span style="display:inline-block;transform-origin:0 50%;transform:scaleX(0.905);white-space:nowrap">PLANT_18</span></div>
<svg class="abs" style="left:17px;top:437px;overflow:visible" width="36" height="36" viewBox="0 0 36 36"><g shape-rendering="crispEdges"><rect x="17" y="8" width="1" height="1" fill="#ffffff"/><rect x="15" y="9" width="1" height="1" fill="#ffffff"/><rect x="17" y="9" width="1" height="1" fill="#ffffff"/><rect x="15" y="10" width="3" height="1" fill="#ffffff"/><rect x="19" y="10" width="1" height="1" fill="#ffffff"/><rect x="21" y="10" width="3" height="1" fill="#ffffff"/><rect x="11" y="11" width="1" height="1" fill="#ffffff"/><rect x="15" y="11" width="8" height="1" fill="#ffffff"/><rect x="24" y="11" width="1" height="1" fill="#ffffff"/><rect x="11" y="12" width="2" height="1" fill="#ffffff"/><rect x="15" y="12" width="4" height="1" fill="#ffffff"/><rect x="20" y="12" width="1" height="1" fill="#ffffff"/><rect x="22" y="12" width="3" height="1" fill="#ffffff"/><rect x="27" y="12" width="4" height="1" fill="#ffffff"/><rect x="12" y="13" width="8" height="1" fill="#ffffff"/><rect x="21" y="13" width="6" height="1" fill="#ffffff"/><rect x="28" y="13" width="2" height="1" fill="#ffffff"/><rect x="12" y="14" width="2" height="1" fill="#ffffff"/><rect x="16" y="14" width="1" height="1" fill="#ffffff"/><rect x="18" y="14" width="2" height="1" fill="#ffffff"/><rect x="21" y="14" width="4" height="1" fill="#ffffff"/><rect x="26" y="14" width="1" height="1" fill="#ffffff"/><rect x="9" y="15" width="4" height="1" fill="#ffffff"/><rect x="14" y="15" width="14" height="1" fill="#ffffff"/><rect x="11" y="16" width="1" height="1" fill="#ffffff"/><rect x="13" y="16" width="14" height="1" fill="#ffffff"/><rect x="28" y="16" width="2" height="1" fill="#ffffff"/><rect x="9" y="17" width="6" height="1" fill="#ffffff"/><rect x="16" y="17" width="13" height="1" fill="#ffffff"/><rect x="31" y="17" width="1" height="1" fill="#ffffff"/><rect x="7" y="18" width="8" height="1" fill="#ffffff"/><rect x="16" y="18" width="4" height="1" fill="#ffffff"/><rect x="21" y="18" width="4" height="1" fill="#ffffff"/><rect x="26" y="18" width="1" height="1" fill="#ffffff"/><rect x="29" y="18" width="2" height="1" fill="#ffffff"/><rect x="8" y="19" width="12" height="1" fill="#ffffff"/><rect x="22" y="19" width="3" height="1" fill="#ffffff"/><rect x="27" y="19" width="2" height="1" fill="#ffffff"/><rect x="7" y="20" width="1" height="1" fill="#ffffff"/><rect x="9" y="20" width="2" height="1" fill="#ffffff"/><rect x="12" y="20" width="4" height="1" fill="#ffffff"/><rect x="17" y="20" width="3" height="1" fill="#ffffff"/><rect x="21" y="20" width="3" height="1" fill="#ffffff"/><rect x="25" y="20" width="1" height="1" fill="#ffffff"/><rect x="8" y="21" width="5" height="1" fill="#ffffff"/><rect x="14" y="21" width="1" height="1" fill="#ffffff"/><rect x="16" y="21" width="8" height="1" fill="#ffffff"/><rect x="25" y="21" width="1" height="1" fill="#ffffff"/><rect x="27" y="21" width="1" height="1" fill="#ffffff"/><rect x="10" y="22" width="1" height="1" fill="#ffffff"/><rect x="13" y="22" width="4" height="1" fill="#ffffff"/><rect x="18" y="22" width="2" height="1" fill="#ffffff"/><rect x="21" y="22" width="4" height="1" fill="#ffffff"/><rect x="26" y="22" width="1" height="1" fill="#ffffff"/><rect x="28" y="22" width="1" height="1" fill="#ffffff"/><rect x="12" y="23" width="7" height="1" fill="#ffffff"/><rect x="20" y="23" width="5" height="1" fill="#ffffff"/><rect x="12" y="24" width="2" height="1" fill="#ffffff"/><rect x="15" y="24" width="1" height="1" fill="#ffffff"/><rect x="17" y="24" width="2" height="1" fill="#ffffff"/><rect x="20" y="24" width="5" height="1" fill="#ffffff"/><rect x="9" y="25" width="1" height="1" fill="#ffffff"/><rect x="15" y="25" width="3" height="1" fill="#ffffff"/><rect x="20" y="25" width="4" height="1" fill="#ffffff"/><rect x="22" y="26" width="2" height="1" fill="#ffffff"/><rect x="16" y="27" width="1" height="1" fill="#ffffff"/></g></svg>
<div class="pitem" style="left:56.6px;top:490px"><span style="display:inline-block;transform-origin:0 50%;transform:scaleX(0.919);white-space:nowrap">PLANT_107</span></div>
<svg class="abs" style="left:17px;top:479px;overflow:visible" width="36" height="36" viewBox="0 0 36 36"><g shape-rendering="crispEdges"><rect x="14" y="5" width="1" height="1" fill="#5fb850"/><rect x="18" y="5" width="1" height="1" fill="#3a8a38"/><rect x="20" y="5" width="1" height="1" fill="#2f6f2f"/><rect x="14" y="6" width="1" height="1" fill="#2a5a2a"/><rect x="15" y="6" width="1" height="1" fill="#4f9f45"/><rect x="16" y="6" width="1" height="1" fill="#3a8a38"/><rect x="17" y="6" width="1" height="1" fill="#4f9f45"/><rect x="18" y="6" width="2" height="1" fill="#2a5a2a"/><rect x="21" y="6" width="1" height="1" fill="#5fb850"/><rect x="11" y="7" width="1" height="1" fill="#5fb850"/><rect x="13" y="7" width="1" height="1" fill="#5fb850"/><rect x="15" y="7" width="1" height="1" fill="#2a5a2a"/><rect x="16" y="7" width="1" height="1" fill="#2f6f2f"/><rect x="18" y="7" width="1" height="1" fill="#2f6f2f"/><rect x="20" y="7" width="1" height="1" fill="#5fb850"/><rect x="21" y="7" width="1" height="1" fill="#468f40"/><rect x="24" y="7" width="1" height="1" fill="#4f9f45"/><rect x="12" y="8" width="1" height="1" fill="#5fb850"/><rect x="13" y="8" width="1" height="1" fill="#468f40"/><rect x="15" y="8" width="2" height="1" fill="#2a5a2a"/><rect x="17" y="8" width="1" height="1" fill="#468f40"/><rect x="18" y="8" width="1" height="1" fill="#2a5a2a"/><rect x="19" y="8" width="1" height="1" fill="#468f40"/><rect x="20" y="8" width="1" height="1" fill="#3a8a38"/><rect x="22" y="8" width="1" height="1" fill="#3a8a38"/><rect x="24" y="8" width="1" height="1" fill="#468f40"/><rect x="25" y="8" width="1" height="1" fill="#2a5a2a"/><rect x="27" y="8" width="1" height="1" fill="#4f9f45"/><rect x="12" y="9" width="1" height="1" fill="#2f6f2f"/><rect x="13" y="9" width="1" height="1" fill="#4f9f45"/><rect x="15" y="9" width="1" height="1" fill="#468f40"/><rect x="17" y="9" width="1" height="1" fill="#2f6f2f"/><rect x="18" y="9" width="1" height="1" fill="#468f40"/><rect x="19" y="9" width="1" height="1" fill="#3a8a38"/><rect x="21" y="9" width="1" height="1" fill="#468f40"/><rect x="23" y="9" width="1" height="1" fill="#4f9f45"/><rect x="25" y="9" width="1" height="1" fill="#4f9f45"/><rect x="26" y="9" width="2" height="1" fill="#3a8a38"/><rect x="29" y="9" width="1" height="1" fill="#3a8a38"/><rect x="8" y="10" width="1" height="1" fill="#2a5a2a"/><rect x="11" y="10" width="2" height="1" fill="#5fb850"/><rect x="13" y="10" width="1" height="1" fill="#2a5a2a"/><rect x="18" y="10" width="1" height="1" fill="#5fb850"/><rect x="20" y="10" width="1" height="1" fill="#468f40"/><rect x="21" y="10" width="1" height="1" fill="#3a8a38"/><rect x="22" y="10" width="1" height="1" fill="#4f9f45"/><rect x="23" y="10" width="1" height="1" fill="#5fb850"/><rect x="24" y="10" width="2" height="1" fill="#2f6f2f"/><rect x="26" y="10" width="1" height="1" fill="#2a5a2a"/><rect x="8" y="11" width="1" height="1" fill="#4f9f45"/><rect x="9" y="11" width="1" height="1" fill="#3a8a38"/><rect x="10" y="11" width="1" height="1" fill="#4f9f45"/><rect x="11" y="11" width="1" height="1" fill="#468f40"/><rect x="14" y="11" width="1" height="1" fill="#5fb850"/><rect x="15" y="11" width="1" height="1" fill="#3a8a38"/><rect x="16" y="11" width="1" height="1" fill="#2a5a2a"/><rect x="18" y="11" width="1" height="1" fill="#2f6f2f"/><rect x="19" y="11" width="1" height="1" fill="#5fb850"/><rect x="20" y="11" width="1" height="1" fill="#3a8a38"/><rect x="21" y="11" width="1" height="1" fill="#5fb850"/><rect x="22" y="11" width="3" height="1" fill="#3a8a38"/><rect x="25" y="11" width="1" height="1" fill="#4f9f45"/><rect x="26" y="11" width="1" height="1" fill="#3a8a38"/><rect x="27" y="11" width="1" height="1" fill="#5fb850"/><rect x="28" y="11" width="1" height="1" fill="#2a5a2a"/><rect x="6" y="12" width="1" height="1" fill="#4f9f45"/><rect x="8" y="12" width="2" height="1" fill="#2a5a2a"/><rect x="10" y="12" width="1" height="1" fill="#5fb850"/><rect x="12" y="12" width="1" height="1" fill="#3a8a38"/><rect x="13" y="12" width="1" height="1" fill="#5fb850"/><rect x="14" y="12" width="1" height="1" fill="#2a5a2a"/><rect x="16" y="12" width="2" height="1" fill="#2f6f2f"/><rect x="18" y="12" width="1" height="1" fill="#468f40"/><rect x="19" y="12" width="1" height="1" fill="#3a8a38"/><rect x="20" y="12" width="1" height="1" fill="#468f40"/><rect x="23" y="12" width="1" height="1" fill="#468f40"/><rect x="24" y="12" width="1" height="1" fill="#4f9f45"/><rect x="26" y="12" width="1" height="1" fill="#3a8a38"/><rect x="27" y="12" width="1" height="1" fill="#2f6f2f"/><rect x="28" y="12" width="1" height="1" fill="#468f40"/><rect x="29" y="12" width="1" height="1" fill="#5fb850"/><rect x="30" y="12" width="1" height="1" fill="#2a5a2a"/><rect x="6" y="13" width="1" height="1" fill="#468f40"/><rect x="7" y="13" width="1" height="1" fill="#2f6f2f"/><rect x="8" y="13" width="2" height="1" fill="#3a8a38"/><rect x="10" y="13" width="1" height="1" fill="#2f6f2f"/><rect x="11" y="13" width="1" height="1" fill="#4f9f45"/><rect x="12" y="13" width="1" height="1" fill="#3a8a38"/><rect x="13" y="13" width="1" height="1" fill="#5fb850"/><rect x="15" y="13" width="2" height="1" fill="#5fb850"/><rect x="17" y="13" width="1" height="1" fill="#2f6f2f"/><rect x="18" y="13" width="1" height="1" fill="#2a5a2a"/><rect x="20" y="13" width="1" height="1" fill="#468f40"/><rect x="24" y="13" width="1" height="1" fill="#4f9f45"/><rect x="25" y="13" width="1" height="1" fill="#2a5a2a"/><rect x="26" y="13" width="1" height="1" fill="#5fb850"/><rect x="29" y="13" width="1" height="1" fill="#468f40"/><rect x="31" y="13" width="1" height="1" fill="#2f6f2f"/><rect x="6" y="14" width="1" height="1" fill="#2a5a2a"/><rect x="7" y="14" width="1" height="1" fill="#5fb850"/><rect x="11" y="14" width="1" height="1" fill="#468f40"/><rect x="12" y="14" width="1" height="1" fill="#2f6f2f"/><rect x="13" y="14" width="2" height="1" fill="#468f40"/><rect x="15" y="14" width="1" height="1" fill="#4f9f45"/><rect x="16" y="14" width="1" height="1" fill="#3a8a38"/><rect x="17" y="14" width="1" height="1" fill="#5fb850"/><rect x="18" y="14" width="2" height="1" fill="#2a5a2a"/><rect x="20" y="14" width="1" height="1" fill="#4f9f45"/><rect x="21" y="14" width="1" height="1" fill="#468f40"/><rect x="22" y="14" width="1" height="1" fill="#2f6f2f"/><rect x="24" y="14" width="1" height="1" fill="#4f9f45"/><rect x="25" y="14" width="1" height="1" fill="#468f40"/><rect x="26" y="14" width="1" height="1" fill="#2a5a2a"/><rect x="27" y="14" width="1" height="1" fill="#468f40"/><rect x="28" y="14" width="1" height="1" fill="#2a5a2a"/><rect x="29" y="14" width="1" height="1" fill="#2f6f2f"/><rect x="30" y="14" width="1" height="1" fill="#468f40"/><rect x="5" y="15" width="1" height="1" fill="#468f40"/><rect x="6" y="15" width="1" height="1" fill="#2a5a2a"/><rect x="7" y="15" width="1" height="1" fill="#468f40"/><rect x="9" y="15" width="1" height="1" fill="#468f40"/><rect x="10" y="15" width="1" height="1" fill="#2a5a2a"/><rect x="11" y="15" width="2" height="1" fill="#468f40"/><rect x="14" y="15" width="1" height="1" fill="#2a5a2a"/><rect x="15" y="15" width="1" height="1" fill="#5fb850"/><rect x="16" y="15" width="1" height="1" fill="#3a8a38"/><rect x="17" y="15" width="1" height="1" fill="#4f9f45"/><rect x="18" y="15" width="1" height="1" fill="#2a5a2a"/><rect x="19" y="15" width="1" height="1" fill="#4f9f45"/><rect x="21" y="15" width="1" height="1" fill="#2a5a2a"/><rect x="22" y="15" width="1" height="1" fill="#4f9f45"/><rect x="23" y="15" width="1" height="1" fill="#2a5a2a"/><rect x="24" y="15" width="1" height="1" fill="#5fb850"/><rect x="26" y="15" width="1" height="1" fill="#2a5a2a"/><rect x="27" y="15" width="1" height="1" fill="#5fb850"/><rect x="28" y="15" width="1" height="1" fill="#2a5a2a"/><rect x="29" y="15" width="1" height="1" fill="#468f40"/><rect x="30" y="15" width="1" height="1" fill="#3a8a38"/><rect x="31" y="15" width="1" height="1" fill="#5fb850"/><rect x="5" y="16" width="1" height="1" fill="#468f40"/><rect x="8" y="16" width="1" height="1" fill="#468f40"/><rect x="10" y="16" width="1" height="1" fill="#2a5a2a"/><rect x="11" y="16" width="1" height="1" fill="#3a8a38"/><rect x="12" y="16" width="1" height="1" fill="#2f6f2f"/><rect x="13" y="16" width="1" height="1" fill="#5fb850"/><rect x="14" y="16" width="2" height="1" fill="#468f40"/><rect x="16" y="16" width="1" height="1" fill="#4f9f45"/><rect x="17" y="16" width="1" height="1" fill="#5fb850"/><rect x="18" y="16" width="1" height="1" fill="#4f9f45"/><rect x="19" y="16" width="1" height="1" fill="#2a5a2a"/><rect x="20" y="16" width="1" height="1" fill="#3a8a38"/><rect x="21" y="16" width="1" height="1" fill="#2a5a2a"/><rect x="23" y="16" width="1" height="1" fill="#4f9f45"/><rect x="25" y="16" width="2" height="1" fill="#468f40"/><rect x="27" y="16" width="2" height="1" fill="#2f6f2f"/><rect x="29" y="16" width="1" height="1" fill="#468f40"/><rect x="31" y="16" width="1" height="1" fill="#468f40"/><rect x="5" y="17" width="1" height="1" fill="#3a8a38"/><rect x="6" y="17" width="1" height="1" fill="#4f9f45"/><rect x="7" y="17" width="1" height="1" fill="#2a5a2a"/><rect x="9" y="17" width="1" height="1" fill="#2a5a2a"/><rect x="10" y="17" width="1" height="1" fill="#2f6f2f"/><rect x="11" y="17" width="1" height="1" fill="#5fb850"/><rect x="12" y="17" width="1" height="1" fill="#2a5a2a"/><rect x="13" y="17" width="1" height="1" fill="#3a8a38"/><rect x="14" y="17" width="1" height="1" fill="#5fb850"/><rect x="16" y="17" width="1" height="1" fill="#2f6f2f"/><rect x="17" y="17" width="2" height="1" fill="#5fb850"/><rect x="19" y="17" width="1" height="1" fill="#2f6f2f"/><rect x="20" y="17" width="1" height="1" fill="#4f9f45"/><rect x="22" y="17" width="1" height="1" fill="#468f40"/><rect x="23" y="17" width="1" height="1" fill="#2f6f2f"/><rect x="24" y="17" width="1" height="1" fill="#3a8a38"/><rect x="26" y="17" width="1" height="1" fill="#468f40"/><rect x="28" y="17" width="1" height="1" fill="#4f9f45"/><rect x="30" y="17" width="1" height="1" fill="#2a5a2a"/><rect x="5" y="18" width="2" height="1" fill="#468f40"/><rect x="8" y="18" width="1" height="1" fill="#468f40"/><rect x="10" y="18" width="1" height="1" fill="#5fb850"/><rect x="14" y="18" width="1" height="1" fill="#468f40"/><rect x="15" y="18" width="1" height="1" fill="#2a5a2a"/><rect x="16" y="18" width="1" height="1" fill="#3a8a38"/><rect x="17" y="18" width="1" height="1" fill="#5fb850"/><rect x="18" y="18" width="1" height="1" fill="#2f6f2f"/><rect x="20" y="18" width="1" height="1" fill="#5fb850"/><rect x="21" y="18" width="1" height="1" fill="#4f9f45"/><rect x="22" y="18" width="1" height="1" fill="#5fb850"/><rect x="23" y="18" width="1" height="1" fill="#3a8a38"/><rect x="24" y="18" width="1" height="1" fill="#4f9f45"/><rect x="25" y="18" width="1" height="1" fill="#468f40"/><rect x="27" y="18" width="2" height="1" fill="#2a5a2a"/><rect x="29" y="18" width="1" height="1" fill="#2f6f2f"/><rect x="30" y="18" width="2" height="1" fill="#4f9f45"/><rect x="6" y="19" width="1" height="1" fill="#4f9f45"/><rect x="8" y="19" width="1" height="1" fill="#4f9f45"/><rect x="9" y="19" width="1" height="1" fill="#2f6f2f"/><rect x="10" y="19" width="2" height="1" fill="#4f9f45"/><rect x="12" y="19" width="1" height="1" fill="#3a8a38"/><rect x="13" y="19" width="1" height="1" fill="#2f6f2f"/><rect x="14" y="19" width="1" height="1" fill="#2a5a2a"/><rect x="15" y="19" width="1" height="1" fill="#4f9f45"/><rect x="16" y="19" width="1" height="1" fill="#3a8a38"/><rect x="17" y="19" width="1" height="1" fill="#2f6f2f"/><rect x="18" y="19" width="1" height="1" fill="#2a5a2a"/><rect x="19" y="19" width="1" height="1" fill="#3a8a38"/><rect x="20" y="19" width="1" height="1" fill="#468f40"/><rect x="21" y="19" width="1" height="1" fill="#5fb850"/><rect x="22" y="19" width="1" height="1" fill="#3a8a38"/><rect x="23" y="19" width="1" height="1" fill="#5fb850"/><rect x="24" y="19" width="1" height="1" fill="#2f6f2f"/><rect x="25" y="19" width="2" height="1" fill="#2a5a2a"/><rect x="27" y="19" width="1" height="1" fill="#468f40"/><rect x="31" y="19" width="2" height="1" fill="#5fb850"/><rect x="6" y="20" width="1" height="1" fill="#3a8a38"/><rect x="7" y="20" width="1" height="1" fill="#2a5a2a"/><rect x="8" y="20" width="1" height="1" fill="#468f40"/><rect x="9" y="20" width="1" height="1" fill="#4f9f45"/><rect x="10" y="20" width="1" height="1" fill="#2f6f2f"/><rect x="11" y="20" width="1" height="1" fill="#468f40"/><rect x="12" y="20" width="1" height="1" fill="#3a8a38"/><rect x="13" y="20" width="2" height="1" fill="#4f9f45"/><rect x="15" y="20" width="1" height="1" fill="#3a8a38"/><rect x="16" y="20" width="1" height="1" fill="#468f40"/><rect x="17" y="20" width="2" height="1" fill="#5fb850"/><rect x="19" y="20" width="1" height="1" fill="#3a8a38"/><rect x="20" y="20" width="1" height="1" fill="#2a5a2a"/><rect x="21" y="20" width="2" height="1" fill="#3a8a38"/><rect x="24" y="20" width="1" height="1" fill="#468f40"/><rect x="25" y="20" width="1" height="1" fill="#4f9f45"/><rect x="26" y="20" width="1" height="1" fill="#5fb850"/><rect x="27" y="20" width="1" height="1" fill="#2a5a2a"/><rect x="28" y="20" width="2" height="1" fill="#3a8a38"/><rect x="30" y="20" width="1" height="1" fill="#468f40"/><rect x="31" y="20" width="1" height="1" fill="#2a5a2a"/><rect x="6" y="21" width="2" height="1" fill="#468f40"/><rect x="8" y="21" width="1" height="1" fill="#3a8a38"/><rect x="10" y="21" width="2" height="1" fill="#4f9f45"/><rect x="12" y="21" width="1" height="1" fill="#5fb850"/><rect x="13" y="21" width="1" height="1" fill="#4f9f45"/><rect x="14" y="21" width="1" height="1" fill="#2f6f2f"/><rect x="16" y="21" width="1" height="1" fill="#5fb850"/><rect x="17" y="21" width="1" height="1" fill="#2a5a2a"/><rect x="18" y="21" width="1" height="1" fill="#2f6f2f"/><rect x="19" y="21" width="1" height="1" fill="#468f40"/><rect x="20" y="21" width="1" height="1" fill="#2a5a2a"/><rect x="21" y="21" width="1" height="1" fill="#3a8a38"/><rect x="22" y="21" width="1" height="1" fill="#4f9f45"/><rect x="23" y="21" width="1" height="1" fill="#5fb850"/><rect x="24" y="21" width="1" height="1" fill="#468f40"/><rect x="25" y="21" width="1" height="1" fill="#3a8a38"/><rect x="28" y="21" width="1" height="1" fill="#3a8a38"/><rect x="6" y="22" width="1" height="1" fill="#4f9f45"/><rect x="7" y="22" width="1" height="1" fill="#3a8a38"/><rect x="10" y="22" width="1" height="1" fill="#468f40"/><rect x="11" y="22" width="1" height="1" fill="#4f9f45"/><rect x="13" y="22" width="1" height="1" fill="#468f40"/><rect x="15" y="22" width="1" height="1" fill="#2f6f2f"/><rect x="17" y="22" width="2" height="1" fill="#2f6f2f"/><rect x="20" y="22" width="1" height="1" fill="#3a8a38"/><rect x="21" y="22" width="1" height="1" fill="#5fb850"/><rect x="22" y="22" width="1" height="1" fill="#3a8a38"/><rect x="23" y="22" width="1" height="1" fill="#468f40"/><rect x="25" y="22" width="1" height="1" fill="#468f40"/><rect x="26" y="22" width="1" height="1" fill="#3a8a38"/><rect x="27" y="22" width="1" height="1" fill="#2f6f2f"/><rect x="28" y="22" width="1" height="1" fill="#468f40"/><rect x="29" y="22" width="1" height="1" fill="#2a5a2a"/><rect x="8" y="23" width="1" height="1" fill="#4f9f45"/><rect x="11" y="23" width="1" height="1" fill="#5fb850"/><rect x="13" y="23" width="1" height="1" fill="#2a5a2a"/><rect x="14" y="23" width="1" height="1" fill="#4f9f45"/><rect x="15" y="23" width="2" height="1" fill="#5fb850"/><rect x="18" y="23" width="1" height="1" fill="#3a8a38"/><rect x="19" y="23" width="1" height="1" fill="#2a5a2a"/><rect x="20" y="23" width="1" height="1" fill="#5fb850"/><rect x="21" y="23" width="2" height="1" fill="#2a5a2a"/><rect x="24" y="23" width="1" height="1" fill="#2f6f2f"/><rect x="26" y="23" width="1" height="1" fill="#2f6f2f"/><rect x="27" y="23" width="1" height="1" fill="#3a8a38"/><rect x="28" y="23" width="1" height="1" fill="#2f6f2f"/><rect x="29" y="23" width="1" height="1" fill="#2a5a2a"/><rect x="30" y="23" width="1" height="1" fill="#468f40"/><rect x="8" y="24" width="1" height="1" fill="#5fb850"/><rect x="10" y="24" width="1" height="1" fill="#2a5a2a"/><rect x="11" y="24" width="1" height="1" fill="#4f9f45"/><rect x="12" y="24" width="1" height="1" fill="#2a5a2a"/><rect x="14" y="24" width="1" height="1" fill="#468f40"/><rect x="15" y="24" width="1" height="1" fill="#2f6f2f"/><rect x="16" y="24" width="1" height="1" fill="#5fb850"/><rect x="17" y="24" width="1" height="1" fill="#4f9f45"/><rect x="18" y="24" width="1" height="1" fill="#2f6f2f"/><rect x="21" y="24" width="1" height="1" fill="#2a5a2a"/><rect x="24" y="24" width="1" height="1" fill="#468f40"/><rect x="25" y="24" width="1" height="1" fill="#5fb850"/><rect x="26" y="24" width="1" height="1" fill="#4f9f45"/><rect x="27" y="24" width="1" height="1" fill="#2f6f2f"/><rect x="29" y="24" width="1" height="1" fill="#2a5a2a"/><rect x="7" y="25" width="2" height="1" fill="#5fb850"/><rect x="10" y="25" width="1" height="1" fill="#4f9f45"/><rect x="11" y="25" width="1" height="1" fill="#2a5a2a"/><rect x="12" y="25" width="1" height="1" fill="#3a8a38"/><rect x="13" y="25" width="1" height="1" fill="#2a5a2a"/><rect x="14" y="25" width="1" height="1" fill="#3a8a38"/><rect x="15" y="25" width="1" height="1" fill="#5fb850"/><rect x="16" y="25" width="1" height="1" fill="#2a5a2a"/><rect x="17" y="25" width="1" height="1" fill="#2f6f2f"/><rect x="18" y="25" width="1" height="1" fill="#2a5a2a"/><rect x="20" y="25" width="1" height="1" fill="#3a8a38"/><rect x="23" y="25" width="2" height="1" fill="#3a8a38"/><rect x="25" y="25" width="2" height="1" fill="#4f9f45"/><rect x="27" y="25" width="1" height="1" fill="#2a5a2a"/><rect x="28" y="25" width="1" height="1" fill="#2f6f2f"/><rect x="7" y="26" width="1" height="1" fill="#2a5a2a"/><rect x="8" y="26" width="1" height="1" fill="#468f40"/><rect x="10" y="26" width="1" height="1" fill="#4f9f45"/><rect x="11" y="26" width="1" height="1" fill="#2a5a2a"/><rect x="13" y="26" width="1" height="1" fill="#2a5a2a"/><rect x="14" y="26" width="1" height="1" fill="#2f6f2f"/><rect x="16" y="26" width="2" height="1" fill="#2f6f2f"/><rect x="18" y="26" width="1" height="1" fill="#468f40"/><rect x="19" y="26" width="1" height="1" fill="#5fb850"/><rect x="21" y="26" width="1" height="1" fill="#4f9f45"/><rect x="22" y="26" width="1" height="1" fill="#2f6f2f"/><rect x="23" y="26" width="2" height="1" fill="#468f40"/><rect x="26" y="26" width="1" height="1" fill="#3a8a38"/><rect x="10" y="27" width="1" height="1" fill="#2a5a2a"/><rect x="11" y="27" width="1" height="1" fill="#5fb850"/><rect x="12" y="27" width="1" height="1" fill="#4f9f45"/><rect x="14" y="27" width="1" height="1" fill="#3a8a38"/><rect x="15" y="27" width="1" height="1" fill="#468f40"/><rect x="17" y="27" width="1" height="1" fill="#2f6f2f"/><rect x="18" y="27" width="1" height="1" fill="#3a8a38"/><rect x="20" y="27" width="1" height="1" fill="#4f9f45"/><rect x="21" y="27" width="1" height="1" fill="#2f6f2f"/><rect x="22" y="27" width="1" height="1" fill="#2a5a2a"/><rect x="24" y="27" width="1" height="1" fill="#2a5a2a"/><rect x="25" y="27" width="1" height="1" fill="#3a8a38"/><rect x="11" y="28" width="1" height="1" fill="#2f6f2f"/><rect x="12" y="28" width="1" height="1" fill="#4f9f45"/><rect x="13" y="28" width="1" height="1" fill="#2a5a2a"/><rect x="16" y="28" width="2" height="1" fill="#4f9f45"/><rect x="18" y="28" width="1" height="1" fill="#2f6f2f"/><rect x="19" y="28" width="1" height="1" fill="#2a5a2a"/><rect x="20" y="28" width="1" height="1" fill="#5fb850"/><rect x="22" y="28" width="1" height="1" fill="#468f40"/><rect x="23" y="28" width="1" height="1" fill="#5fb850"/><rect x="11" y="29" width="1" height="1" fill="#4f9f45"/><rect x="13" y="29" width="1" height="1" fill="#2f6f2f"/><rect x="17" y="29" width="1" height="1" fill="#2f6f2f"/><rect x="19" y="29" width="1" height="1" fill="#4f9f45"/><rect x="20" y="29" width="1" height="1" fill="#2f6f2f"/><rect x="22" y="29" width="1" height="1" fill="#468f40"/><rect x="17" y="30" width="2" height="1" fill="#3a8a38"/><rect x="17" y="31" width="1" height="1" fill="#2a5a2a"/></g><path d="M8 14.5 L16 15 L19 18 L23 19 L25 24 M16 15 L13 8" stroke="#fff" stroke-width="1" fill="none"/></svg>
<div class="pitem" style="left:56.6px;top:532px"><span style="display:inline-block;transform-origin:0 50%;transform:scaleX(0.905);white-space:nowrap">PLANT_21</span></div>
<svg class="abs" style="left:17px;top:521px;overflow:visible" width="36" height="36" viewBox="0 0 36 36"><g shape-rendering="crispEdges"><rect x="14" y="7" width="1" height="1" fill="#ffffff"/><rect x="16" y="7" width="1" height="1" fill="#ffffff"/><rect x="22" y="7" width="1" height="1" fill="#ffffff"/><rect x="24" y="7" width="1" height="1" fill="#ffffff"/><rect x="16" y="8" width="1" height="1" fill="#ffffff"/><rect x="21" y="8" width="1" height="1" fill="#ffffff"/><rect x="23" y="8" width="2" height="1" fill="#ffffff"/><rect x="13" y="9" width="1" height="1" fill="#ffffff"/><rect x="15" y="9" width="1" height="1" fill="#ffffff"/><rect x="20" y="9" width="1" height="1" fill="#ffffff"/><rect x="22" y="9" width="1" height="1" fill="#ffffff"/><rect x="11" y="10" width="1" height="1" fill="#ffffff"/><rect x="13" y="10" width="2" height="1" fill="#ffffff"/><rect x="16" y="10" width="8" height="1" fill="#ffffff"/><rect x="12" y="11" width="1" height="1" fill="#ffffff"/><rect x="16" y="11" width="1" height="1" fill="#ffffff"/><rect x="18" y="11" width="1" height="1" fill="#ffffff"/><rect x="20" y="11" width="3" height="1" fill="#ffffff"/><rect x="6" y="12" width="1" height="1" fill="#ffffff"/><rect x="8" y="12" width="3" height="1" fill="#ffffff"/><rect x="13" y="12" width="5" height="1" fill="#ffffff"/><rect x="20" y="12" width="1" height="1" fill="#ffffff"/><rect x="22" y="12" width="4" height="1" fill="#ffffff"/><rect x="7" y="13" width="5" height="1" fill="#ffffff"/><rect x="13" y="13" width="1" height="1" fill="#ffffff"/><rect x="16" y="13" width="7" height="1" fill="#ffffff"/><rect x="24" y="13" width="2" height="1" fill="#ffffff"/><rect x="27" y="13" width="2" height="1" fill="#ffffff"/><rect x="8" y="14" width="14" height="1" fill="#ffffff"/><rect x="23" y="14" width="3" height="1" fill="#ffffff"/><rect x="27" y="14" width="3" height="1" fill="#ffffff"/><rect x="7" y="15" width="13" height="1" fill="#ffffff"/><rect x="21" y="15" width="7" height="1" fill="#ffffff"/><rect x="29" y="15" width="1" height="1" fill="#ffffff"/><rect x="9" y="16" width="3" height="1" fill="#ffffff"/><rect x="13" y="16" width="6" height="1" fill="#ffffff"/><rect x="20" y="16" width="2" height="1" fill="#ffffff"/><rect x="23" y="16" width="1" height="1" fill="#ffffff"/><rect x="25" y="16" width="3" height="1" fill="#ffffff"/><rect x="10" y="17" width="5" height="1" fill="#ffffff"/><rect x="16" y="17" width="2" height="1" fill="#ffffff"/><rect x="21" y="17" width="1" height="1" fill="#ffffff"/><rect x="24" y="17" width="1" height="1" fill="#ffffff"/><rect x="10" y="18" width="9" height="1" fill="#ffffff"/><rect x="20" y="18" width="1" height="1" fill="#ffffff"/><rect x="24" y="18" width="2" height="1" fill="#ffffff"/><rect x="9" y="19" width="5" height="1" fill="#ffffff"/><rect x="15" y="19" width="3" height="1" fill="#ffffff"/><rect x="19" y="19" width="5" height="1" fill="#ffffff"/><rect x="25" y="19" width="1" height="1" fill="#ffffff"/><rect x="10" y="20" width="2" height="1" fill="#ffffff"/><rect x="13" y="20" width="12" height="1" fill="#ffffff"/><rect x="27" y="20" width="2" height="1" fill="#ffffff"/><rect x="8" y="21" width="16" height="1" fill="#ffffff"/><rect x="25" y="21" width="1" height="1" fill="#ffffff"/><rect x="27" y="21" width="2" height="1" fill="#ffffff"/><rect x="10" y="22" width="2" height="1" fill="#ffffff"/><rect x="13" y="22" width="9" height="1" fill="#ffffff"/><rect x="24" y="22" width="1" height="1" fill="#ffffff"/><rect x="27" y="22" width="3" height="1" fill="#ffffff"/><rect x="16" y="23" width="1" height="1" fill="#ffffff"/><rect x="18" y="23" width="5" height="1" fill="#ffffff"/><rect x="24" y="23" width="3" height="1" fill="#ffffff"/><rect x="28" y="23" width="2" height="1" fill="#ffffff"/><rect x="13" y="24" width="1" height="1" fill="#ffffff"/><rect x="15" y="24" width="1" height="1" fill="#ffffff"/><rect x="18" y="24" width="1" height="1" fill="#ffffff"/><rect x="20" y="24" width="1" height="1" fill="#ffffff"/><rect x="22" y="24" width="1" height="1" fill="#ffffff"/><rect x="24" y="24" width="1" height="1" fill="#ffffff"/><rect x="27" y="24" width="2" height="1" fill="#ffffff"/><rect x="13" y="25" width="1" height="1" fill="#ffffff"/><rect x="15" y="25" width="4" height="1" fill="#ffffff"/><rect x="20" y="25" width="5" height="1" fill="#ffffff"/><rect x="13" y="26" width="2" height="1" fill="#ffffff"/><rect x="16" y="26" width="1" height="1" fill="#ffffff"/><rect x="19" y="26" width="1" height="1" fill="#ffffff"/><rect x="23" y="26" width="1" height="1" fill="#ffffff"/><rect x="13" y="27" width="1" height="1" fill="#ffffff"/><rect x="19" y="27" width="2" height="1" fill="#ffffff"/><rect x="23" y="27" width="1" height="1" fill="#ffffff"/><rect x="19" y="28" width="1" height="1" fill="#ffffff"/><rect x="21" y="28" width="3" height="1" fill="#ffffff"/><rect x="20" y="29" width="3" height="1" fill="#ffffff"/></g></svg>
<div class="pitem" style="left:56.6px;top:574px"><span style="display:inline-block;transform-origin:0 50%;transform:scaleX(0.919);white-space:nowrap">PLANT_108</span></div>
<svg class="abs" style="left:17px;top:563px;overflow:visible" width="36" height="36" viewBox="0 0 36 36"><g shape-rendering="crispEdges"><rect x="14" y="9" width="1" height="1" fill="#3a7a4a"/><rect x="15" y="9" width="1" height="1" fill="#5a9a6a"/><rect x="13" y="10" width="1" height="1" fill="#3f8f5a"/><rect x="17" y="10" width="1" height="1" fill="#4a7a5a"/><rect x="24" y="10" width="1" height="1" fill="#4a7a5a"/><rect x="12" y="11" width="1" height="1" fill="#3a7a4a"/><rect x="13" y="11" width="1" height="1" fill="#7a5a4a"/><rect x="14" y="11" width="1" height="1" fill="#5a9a6a"/><rect x="15" y="11" width="1" height="1" fill="#4a7a5a"/><rect x="16" y="11" width="1" height="1" fill="#3a7a4a"/><rect x="18" y="11" width="1" height="1" fill="#4a7a5a"/><rect x="20" y="11" width="1" height="1" fill="#4a7a5a"/><rect x="22" y="11" width="1" height="1" fill="#7a5a4a"/><rect x="23" y="11" width="1" height="1" fill="#4a7a5a"/><rect x="24" y="11" width="1" height="1" fill="#5a9a6a"/><rect x="25" y="11" width="1" height="1" fill="#4a7a5a"/><rect x="12" y="12" width="1" height="1" fill="#3f8f5a"/><rect x="13" y="12" width="1" height="1" fill="#4a7a5a"/><rect x="14" y="12" width="1" height="1" fill="#7a5a4a"/><rect x="15" y="12" width="1" height="1" fill="#5a9a6a"/><rect x="17" y="12" width="1" height="1" fill="#7a5a4a"/><rect x="19" y="12" width="1" height="1" fill="#7a5a4a"/><rect x="20" y="12" width="1" height="1" fill="#4a7a5a"/><rect x="21" y="12" width="2" height="1" fill="#3a7a4a"/><rect x="23" y="12" width="1" height="1" fill="#4a7a5a"/><rect x="24" y="12" width="1" height="1" fill="#3f8f5a"/><rect x="11" y="13" width="1" height="1" fill="#3a7a4a"/><rect x="12" y="13" width="2" height="1" fill="#5a9a6a"/><rect x="14" y="13" width="2" height="1" fill="#3f8f5a"/><rect x="18" y="13" width="2" height="1" fill="#4a7a5a"/><rect x="20" y="13" width="1" height="1" fill="#5a9a6a"/><rect x="22" y="13" width="1" height="1" fill="#3a7a4a"/><rect x="23" y="13" width="1" height="1" fill="#3f8f5a"/><rect x="24" y="13" width="1" height="1" fill="#5a9a6a"/><rect x="6" y="14" width="1" height="1" fill="#4a7a5a"/><rect x="7" y="14" width="1" height="1" fill="#5a9a6a"/><rect x="8" y="14" width="1" height="1" fill="#3f8f5a"/><rect x="9" y="14" width="1" height="1" fill="#7a5a4a"/><rect x="10" y="14" width="1" height="1" fill="#4a7a5a"/><rect x="12" y="14" width="1" height="1" fill="#7a5a4a"/><rect x="14" y="14" width="1" height="1" fill="#5a9a6a"/><rect x="15" y="14" width="1" height="1" fill="#3f8f5a"/><rect x="16" y="14" width="2" height="1" fill="#5a9a6a"/><rect x="18" y="14" width="1" height="1" fill="#3a7a4a"/><rect x="19" y="14" width="1" height="1" fill="#5a9a6a"/><rect x="20" y="14" width="1" height="1" fill="#3f8f5a"/><rect x="21" y="14" width="1" height="1" fill="#3a7a4a"/><rect x="22" y="14" width="1" height="1" fill="#7a5a4a"/><rect x="23" y="14" width="2" height="1" fill="#5a9a6a"/><rect x="25" y="14" width="1" height="1" fill="#7a5a4a"/><rect x="5" y="15" width="2" height="1" fill="#7a5a4a"/><rect x="8" y="15" width="1" height="1" fill="#3f8f5a"/><rect x="9" y="15" width="1" height="1" fill="#4a7a5a"/><rect x="10" y="15" width="1" height="1" fill="#5a9a6a"/><rect x="12" y="15" width="1" height="1" fill="#4a7a5a"/><rect x="13" y="15" width="1" height="1" fill="#3f8f5a"/><rect x="15" y="15" width="1" height="1" fill="#3f8f5a"/><rect x="17" y="15" width="2" height="1" fill="#3f8f5a"/><rect x="19" y="15" width="1" height="1" fill="#3a7a4a"/><rect x="22" y="15" width="1" height="1" fill="#7a5a4a"/><rect x="24" y="15" width="1" height="1" fill="#7a5a4a"/><rect x="25" y="15" width="1" height="1" fill="#4a7a5a"/><rect x="26" y="15" width="1" height="1" fill="#7a5a4a"/><rect x="28" y="15" width="1" height="1" fill="#4a7a5a"/><rect x="6" y="16" width="1" height="1" fill="#3f8f5a"/><rect x="7" y="16" width="1" height="1" fill="#3a7a4a"/><rect x="8" y="16" width="1" height="1" fill="#4a7a5a"/><rect x="9" y="16" width="1" height="1" fill="#3f8f5a"/><rect x="11" y="16" width="2" height="1" fill="#7a5a4a"/><rect x="14" y="16" width="1" height="1" fill="#3f8f5a"/><rect x="15" y="16" width="1" height="1" fill="#5a9a6a"/><rect x="16" y="16" width="1" height="1" fill="#4a7a5a"/><rect x="17" y="16" width="1" height="1" fill="#7a5a4a"/><rect x="19" y="16" width="1" height="1" fill="#5a9a6a"/><rect x="20" y="16" width="2" height="1" fill="#3a7a4a"/><rect x="22" y="16" width="1" height="1" fill="#7a5a4a"/><rect x="24" y="16" width="1" height="1" fill="#3f8f5a"/><rect x="25" y="16" width="2" height="1" fill="#3a7a4a"/><rect x="28" y="16" width="1" height="1" fill="#5a9a6a"/><rect x="29" y="16" width="1" height="1" fill="#3f8f5a"/><rect x="6" y="17" width="1" height="1" fill="#3f8f5a"/><rect x="7" y="17" width="1" height="1" fill="#4a7a5a"/><rect x="9" y="17" width="1" height="1" fill="#3a7a4a"/><rect x="10" y="17" width="1" height="1" fill="#5a9a6a"/><rect x="12" y="17" width="1" height="1" fill="#5a9a6a"/><rect x="13" y="17" width="1" height="1" fill="#7a5a4a"/><rect x="14" y="17" width="1" height="1" fill="#3f8f5a"/><rect x="16" y="17" width="1" height="1" fill="#4a7a5a"/><rect x="17" y="17" width="2" height="1" fill="#7a5a4a"/><rect x="19" y="17" width="1" height="1" fill="#5a9a6a"/><rect x="20" y="17" width="1" height="1" fill="#7a5a4a"/><rect x="21" y="17" width="1" height="1" fill="#3a7a4a"/><rect x="22" y="17" width="2" height="1" fill="#5a9a6a"/><rect x="24" y="17" width="1" height="1" fill="#4a7a5a"/><rect x="25" y="17" width="3" height="1" fill="#3f8f5a"/><rect x="28" y="17" width="1" height="1" fill="#7a5a4a"/><rect x="30" y="17" width="1" height="1" fill="#3a7a4a"/><rect x="31" y="17" width="1" height="1" fill="#5a9a6a"/><rect x="7" y="18" width="1" height="1" fill="#4a7a5a"/><rect x="8" y="18" width="1" height="1" fill="#5a9a6a"/><rect x="10" y="18" width="1" height="1" fill="#3f8f5a"/><rect x="11" y="18" width="1" height="1" fill="#4a7a5a"/><rect x="12" y="18" width="1" height="1" fill="#7a5a4a"/><rect x="13" y="18" width="3" height="1" fill="#3a7a4a"/><rect x="16" y="18" width="1" height="1" fill="#7a5a4a"/><rect x="17" y="18" width="1" height="1" fill="#3a7a4a"/><rect x="18" y="18" width="1" height="1" fill="#4a7a5a"/><rect x="19" y="18" width="1" height="1" fill="#3f8f5a"/><rect x="20" y="18" width="1" height="1" fill="#3a7a4a"/><rect x="21" y="18" width="2" height="1" fill="#4a7a5a"/><rect x="23" y="18" width="1" height="1" fill="#3f8f5a"/><rect x="24" y="18" width="1" height="1" fill="#5a9a6a"/><rect x="25" y="18" width="2" height="1" fill="#4a7a5a"/><rect x="28" y="18" width="1" height="1" fill="#3a7a4a"/><rect x="12" y="19" width="1" height="1" fill="#3a7a4a"/><rect x="14" y="19" width="2" height="1" fill="#3f8f5a"/><rect x="16" y="19" width="1" height="1" fill="#7a5a4a"/><rect x="17" y="19" width="1" height="1" fill="#5a9a6a"/><rect x="18" y="19" width="1" height="1" fill="#4a7a5a"/><rect x="19" y="19" width="1" height="1" fill="#7a5a4a"/><rect x="21" y="19" width="1" height="1" fill="#7a5a4a"/><rect x="22" y="19" width="2" height="1" fill="#4a7a5a"/><rect x="24" y="19" width="1" height="1" fill="#3a7a4a"/><rect x="27" y="19" width="1" height="1" fill="#7a5a4a"/><rect x="29" y="19" width="1" height="1" fill="#7a5a4a"/><rect x="8" y="20" width="1" height="1" fill="#3f8f5a"/><rect x="9" y="20" width="2" height="1" fill="#3a7a4a"/><rect x="11" y="20" width="1" height="1" fill="#4a7a5a"/><rect x="12" y="20" width="1" height="1" fill="#7a5a4a"/><rect x="13" y="20" width="1" height="1" fill="#5a9a6a"/><rect x="14" y="20" width="1" height="1" fill="#7a5a4a"/><rect x="18" y="20" width="1" height="1" fill="#4a7a5a"/><rect x="20" y="20" width="2" height="1" fill="#7a5a4a"/><rect x="23" y="20" width="1" height="1" fill="#5a9a6a"/><rect x="25" y="20" width="1" height="1" fill="#5a9a6a"/><rect x="8" y="21" width="4" height="1" fill="#3a7a4a"/><rect x="12" y="21" width="1" height="1" fill="#3f8f5a"/><rect x="13" y="21" width="3" height="1" fill="#4a7a5a"/><rect x="16" y="21" width="1" height="1" fill="#5a9a6a"/><rect x="17" y="21" width="1" height="1" fill="#7a5a4a"/><rect x="20" y="21" width="1" height="1" fill="#3a7a4a"/><rect x="21" y="21" width="1" height="1" fill="#3f8f5a"/><rect x="22" y="21" width="1" height="1" fill="#3a7a4a"/><rect x="23" y="21" width="1" height="1" fill="#7a5a4a"/><rect x="24" y="21" width="1" height="1" fill="#4a7a5a"/><rect x="25" y="21" width="1" height="1" fill="#3f8f5a"/><rect x="26" y="21" width="1" height="1" fill="#5a9a6a"/><rect x="7" y="22" width="1" height="1" fill="#7a5a4a"/><rect x="8" y="22" width="1" height="1" fill="#4a7a5a"/><rect x="10" y="22" width="1" height="1" fill="#7a5a4a"/><rect x="11" y="22" width="2" height="1" fill="#3f8f5a"/><rect x="13" y="22" width="1" height="1" fill="#5a9a6a"/><rect x="14" y="22" width="1" height="1" fill="#3f8f5a"/><rect x="17" y="22" width="2" height="1" fill="#3a7a4a"/><rect x="19" y="22" width="1" height="1" fill="#7a5a4a"/><rect x="21" y="22" width="1" height="1" fill="#7a5a4a"/><rect x="22" y="22" width="1" height="1" fill="#5a9a6a"/><rect x="24" y="22" width="1" height="1" fill="#3f8f5a"/><rect x="25" y="22" width="1" height="1" fill="#4a7a5a"/><rect x="26" y="22" width="1" height="1" fill="#7a5a4a"/><rect x="27" y="22" width="1" height="1" fill="#3f8f5a"/><rect x="8" y="23" width="1" height="1" fill="#3a7a4a"/><rect x="10" y="23" width="1" height="1" fill="#4a7a5a"/><rect x="12" y="23" width="1" height="1" fill="#4a7a5a"/><rect x="14" y="23" width="1" height="1" fill="#5a9a6a"/><rect x="17" y="23" width="1" height="1" fill="#3f8f5a"/><rect x="18" y="23" width="1" height="1" fill="#3a7a4a"/><rect x="19" y="23" width="1" height="1" fill="#4a7a5a"/><rect x="21" y="23" width="1" height="1" fill="#3f8f5a"/><rect x="22" y="23" width="1" height="1" fill="#3a7a4a"/><rect x="24" y="23" width="2" height="1" fill="#3f8f5a"/><rect x="26" y="23" width="1" height="1" fill="#3a7a4a"/><rect x="15" y="24" width="1" height="1" fill="#3a7a4a"/><rect x="17" y="24" width="1" height="1" fill="#5a9a6a"/><rect x="18" y="24" width="1" height="1" fill="#3a7a4a"/><rect x="22" y="24" width="2" height="1" fill="#5a9a6a"/><rect x="27" y="24" width="1" height="1" fill="#7a5a4a"/><rect x="15" y="25" width="2" height="1" fill="#7a5a4a"/><rect x="17" y="25" width="1" height="1" fill="#3f8f5a"/><rect x="20" y="25" width="1" height="1" fill="#4a7a5a"/><rect x="18" y="26" width="1" height="1" fill="#5a9a6a"/><rect x="19" y="26" width="1" height="1" fill="#7a5a4a"/></g><rect x="14" y="20" width="5" height="4" fill="#7be060" transform="rotate(25 16 22)"/><rect x="22" y="22" width="2" height="2" fill="#c040e0"/></svg>
<div class="pitem" style="left:56.6px;top:616px"><span style="display:inline-block;transform-origin:0 50%;transform:scaleX(0.886);white-space:nowrap">PLANT_2</span></div>
<svg class="abs" style="left:17px;top:605px;overflow:visible" width="36" height="36" viewBox="0 0 36 36"><g shape-rendering="crispEdges"><rect x="18" y="5" width="1" height="1" fill="#ffffff"/><rect x="17" y="6" width="3" height="1" fill="#ffffff"/><rect x="12" y="7" width="2" height="1" fill="#ffffff"/><rect x="18" y="7" width="1" height="1" fill="#ffffff"/><rect x="20" y="7" width="1" height="1" fill="#ffffff"/><rect x="11" y="8" width="3" height="1" fill="#ffffff"/><rect x="15" y="8" width="2" height="1" fill="#ffffff"/><rect x="19" y="8" width="1" height="1" fill="#ffffff"/><rect x="24" y="8" width="1" height="1" fill="#ffffff"/><rect x="11" y="9" width="2" height="1" fill="#ffffff"/><rect x="14" y="9" width="1" height="1" fill="#ffffff"/><rect x="17" y="9" width="4" height="1" fill="#ffffff"/><rect x="22" y="9" width="3" height="1" fill="#ffffff"/><rect x="11" y="10" width="4" height="1" fill="#ffffff"/><rect x="16" y="10" width="5" height="1" fill="#ffffff"/><rect x="22" y="10" width="1" height="1" fill="#ffffff"/><rect x="7" y="11" width="1" height="1" fill="#ffffff"/><rect x="9" y="11" width="5" height="1" fill="#ffffff"/><rect x="15" y="11" width="2" height="1" fill="#ffffff"/><rect x="19" y="11" width="3" height="1" fill="#ffffff"/><rect x="23" y="11" width="1" height="1" fill="#ffffff"/><rect x="8" y="12" width="1" height="1" fill="#ffffff"/><rect x="10" y="12" width="3" height="1" fill="#ffffff"/><rect x="14" y="12" width="1" height="1" fill="#ffffff"/><rect x="16" y="12" width="7" height="1" fill="#ffffff"/><rect x="24" y="12" width="2" height="1" fill="#ffffff"/><rect x="27" y="12" width="3" height="1" fill="#ffffff"/><rect x="7" y="13" width="1" height="1" fill="#ffffff"/><rect x="9" y="13" width="3" height="1" fill="#ffffff"/><rect x="13" y="13" width="5" height="1" fill="#ffffff"/><rect x="19" y="13" width="5" height="1" fill="#ffffff"/><rect x="25" y="13" width="2" height="1" fill="#ffffff"/><rect x="7" y="14" width="8" height="1" fill="#ffffff"/><rect x="17" y="14" width="6" height="1" fill="#ffffff"/><rect x="24" y="14" width="1" height="1" fill="#ffffff"/><rect x="27" y="14" width="2" height="1" fill="#ffffff"/><rect x="9" y="15" width="7" height="1" fill="#ffffff"/><rect x="17" y="15" width="9" height="1" fill="#ffffff"/><rect x="27" y="15" width="2" height="1" fill="#ffffff"/><rect x="9" y="16" width="1" height="1" fill="#ffffff"/><rect x="12" y="16" width="1" height="1" fill="#ffffff"/><rect x="15" y="16" width="4" height="1" fill="#ffffff"/><rect x="20" y="16" width="9" height="1" fill="#ffffff"/><rect x="6" y="17" width="1" height="1" fill="#ffffff"/><rect x="8" y="17" width="23" height="1" fill="#ffffff"/><rect x="6" y="18" width="5" height="1" fill="#ffffff"/><rect x="12" y="18" width="16" height="1" fill="#ffffff"/><rect x="30" y="18" width="2" height="1" fill="#ffffff"/><rect x="6" y="19" width="6" height="1" fill="#ffffff"/><rect x="13" y="19" width="4" height="1" fill="#ffffff"/><rect x="18" y="19" width="5" height="1" fill="#ffffff"/><rect x="24" y="19" width="3" height="1" fill="#ffffff"/><rect x="28" y="19" width="4" height="1" fill="#ffffff"/><rect x="6" y="20" width="3" height="1" fill="#ffffff"/><rect x="11" y="20" width="3" height="1" fill="#ffffff"/><rect x="15" y="20" width="4" height="1" fill="#ffffff"/><rect x="20" y="20" width="7" height="1" fill="#ffffff"/><rect x="28" y="20" width="3" height="1" fill="#ffffff"/><rect x="8" y="21" width="9" height="1" fill="#ffffff"/><rect x="18" y="21" width="9" height="1" fill="#ffffff"/><rect x="28" y="21" width="2" height="1" fill="#ffffff"/><rect x="9" y="22" width="2" height="1" fill="#ffffff"/><rect x="12" y="22" width="6" height="1" fill="#ffffff"/><rect x="19" y="22" width="7" height="1" fill="#ffffff"/><rect x="27" y="22" width="2" height="1" fill="#ffffff"/><rect x="9" y="23" width="3" height="1" fill="#ffffff"/><rect x="14" y="23" width="5" height="1" fill="#ffffff"/><rect x="20" y="23" width="3" height="1" fill="#ffffff"/><rect x="24" y="23" width="5" height="1" fill="#ffffff"/><rect x="7" y="24" width="7" height="1" fill="#ffffff"/><rect x="15" y="24" width="5" height="1" fill="#ffffff"/><rect x="21" y="24" width="6" height="1" fill="#ffffff"/><rect x="28" y="24" width="2" height="1" fill="#ffffff"/><rect x="7" y="25" width="3" height="1" fill="#ffffff"/><rect x="11" y="25" width="14" height="1" fill="#ffffff"/><rect x="26" y="25" width="2" height="1" fill="#ffffff"/><rect x="29" y="25" width="1" height="1" fill="#ffffff"/><rect x="12" y="26" width="2" height="1" fill="#ffffff"/><rect x="15" y="26" width="3" height="1" fill="#ffffff"/><rect x="19" y="26" width="1" height="1" fill="#ffffff"/><rect x="21" y="26" width="6" height="1" fill="#ffffff"/><rect x="11" y="27" width="3" height="1" fill="#ffffff"/><rect x="15" y="27" width="1" height="1" fill="#ffffff"/><rect x="17" y="27" width="1" height="1" fill="#ffffff"/><rect x="19" y="27" width="7" height="1" fill="#ffffff"/><rect x="11" y="28" width="2" height="1" fill="#ffffff"/><rect x="14" y="28" width="1" height="1" fill="#ffffff"/><rect x="16" y="28" width="2" height="1" fill="#ffffff"/><rect x="19" y="28" width="7" height="1" fill="#ffffff"/><rect x="11" y="29" width="1" height="1" fill="#ffffff"/><rect x="13" y="29" width="1" height="1" fill="#ffffff"/><rect x="17" y="29" width="3" height="1" fill="#ffffff"/><rect x="21" y="29" width="4" height="1" fill="#ffffff"/><rect x="17" y="30" width="1" height="1" fill="#ffffff"/><rect x="24" y="30" width="2" height="1" fill="#ffffff"/></g></svg>
<div class="vtab" style="top:24px;height:53px"><span style="letter-spacing:-0.43px;top:28.7px">Thu Vi...</span></div>
<div class="vtab act" style="top:77px;height:55px"><span style="letter-spacing:-0.55px;top:28.4px">Ky Hieu</span></div>
<div class="vtab" style="top:132px;height:54px"><span style="letter-spacing:-0.19px;top:27.6px">Modeli...</span></div>
<div class="vtab" style="top:186px;height:54px"><span style="letter-spacing:-0.22px;top:27.6px">Constr...</span></div>
<div class="vtab" style="top:240px;height:54px"><span style="letter-spacing:0.05px;top:28.7px">Annot...</span></div>
<div class="vtab" style="top:294px;height:54px"><span style="letter-spacing:0.06px;top:28.9px">Archit...</span></div>
<div class="vtab" style="top:348px;height:54px"><span style="letter-spacing:-0.19px;top:27.2px">Mecha...</span></div>
<div class="vtab" style="top:402px;height:54px"><span style="letter-spacing:-0.35px;top:29.1px">Electri...</span></div>
<div class="vtab" style="top:456px;height:54px"><span style="letter-spacing:0.07px;top:26.3px">Civil</span></div>
<div class="vtab" style="top:510px;height:53px"><span style="letter-spacing:-0.08px;top:29.0px">Struct...</span></div>
<div class="vtab" style="top:563px;height:55px"><span style="letter-spacing:0.19px;top:29.3px">Hatch...</span></div>
<div class="vtab" style="top:618px;height:55px"><span style="letter-spacing:-0.50px;top:26.8px">Tables</span></div>
<div class="vtab" style="top:673px;height:54px"><span style="letter-spacing:-0.19px;top:26.9px">Comm...</span></div>
<div class="vtab" style="top:727px;height:53px"><span style="letter-spacing:-0.34px;top:26.8px">Leaders</span></div>
</div>
<svg class="abs" style="left:207px;top:84px;will-change:transform" width="1377" height="765" viewBox="207 84 1377 765" shape-rendering="crispEdges">
<rect x="207" y="84" width="1377" height="765" fill="#000"/>
<text x="211" y="102" font-family="Liberation Sans, sans-serif" font-size="12.5" fill="#e8e8e8" letter-spacing="0.3">[−][Top][2D Wireframe]</text>
<g shape-rendering="auto">
<path d="M352 243.4 H684" stroke="#00d0d8" stroke-width="1.15" fill="none"/>
<text x="695.6" y="245.0" font-family="Liberation Sans, sans-serif" font-size="10" fill="#f2f2f2" letter-spacing="0.2">0.35</text>
<path d="M352 278.4 H684" stroke="#c0c0c0" stroke-width="1.15" fill="none"/>
<text x="695.6" y="278.9" font-family="Liberation Sans, sans-serif" font-size="10" fill="#f2f2f2" letter-spacing="0.2">0.18</text>
<path d="M352 313.4 H684" stroke="#c86400" stroke-width="1.15" fill="none"/>
<text x="695.6" y="313.9" font-family="Liberation Sans, sans-serif" font-size="10" fill="#f2f2f2" letter-spacing="0.2">0.13</text>
<path d="M352 348.4 H684" stroke="#303030" stroke-width="1.15" fill="none"/>
<text x="695.6" y="349.0" font-family="Liberation Sans, sans-serif" font-size="10" fill="#f2f2f2" letter-spacing="0.2">0.09</text>
<path d="M352 383.4 H684" stroke="#4a74a4" stroke-width="1.15" stroke-dasharray="9.3 4.95" stroke-dashoffset="3.4" fill="none"/>
<text x="293.8" y="384.2" font-family="Liberation Sans, sans-serif" font-size="10.2" fill="#f2f2f2" textLength="31.8" lengthAdjust="spacingAndGlyphs">SHADE</text>
<text x="695.6" y="385.8" font-family="Liberation Sans, sans-serif" font-size="10" fill="#f2f2f2" letter-spacing="0.2">0.09</text>
<path d="M352 418.4 H684" stroke="#f00000" stroke-width="1.15" stroke-dasharray="11.6 2 1.5 2" stroke-dashoffset="3.1" fill="none"/>
<text x="293.8" y="418.8" font-family="Liberation Sans, sans-serif" font-size="10.2" fill="#f2f2f2" textLength="26.3" lengthAdjust="spacingAndGlyphs">TRỤC</text>
<text x="695.6" y="419.2" font-family="Liberation Sans, sans-serif" font-size="10" fill="#f2f2f2" letter-spacing="0.2">0.10</text>
<path d="M352 453.4 H684" stroke="#808080" stroke-width="1.15" fill="none"/>
<text x="293.8" y="451.9" font-family="Liberation Sans, sans-serif" font-size="10.2" fill="#f2f2f2" textLength="18.7" lengthAdjust="spacingAndGlyphs">DIM</text>
<text x="695.6" y="454.0" font-family="Liberation Sans, sans-serif" font-size="10" fill="#f2f2f2" letter-spacing="0.2">0.10</text>
<path d="M352 488.4 H684" stroke="#d8d8d8" stroke-width="1.15" fill="none"/>
<text x="293.8" y="487.0" font-family="Liberation Sans, sans-serif" font-size="10.2" fill="#f2f2f2" textLength="23.2" lengthAdjust="spacingAndGlyphs">TEXT</text>
<text x="695.6" y="489.0" font-family="Liberation Sans, sans-serif" font-size="10" fill="#f2f2f2" letter-spacing="0.2">0.25</text>
<path d="M352 523.4 H684" stroke="#00c000" stroke-width="1.15" fill="none"/>
<text x="293.8" y="519.9" font-family="Liberation Sans, sans-serif" font-size="10.2" fill="#f2f2f2" textLength="17.3" lengthAdjust="spacingAndGlyphs">CÂY</text>
<text x="695.6" y="523.9" font-family="Liberation Sans, sans-serif" font-size="10" fill="#f2f2f2" letter-spacing="0.2">0.08</text>
<path d="M352 558.4 H684" stroke="#c800c8" stroke-width="1.15" fill="none"/>
<text x="293.8" y="556.9" font-family="Liberation Sans, sans-serif" font-size="10.2" fill="#f2f2f2" textLength="23.2" lengthAdjust="spacingAndGlyphs">ĐIỆN</text>
<text x="695.6" y="558.9" font-family="Liberation Sans, sans-serif" font-size="10" fill="#f2f2f2" letter-spacing="0.2">0.30</text>
<path d="M352 593.4 H684" stroke="#0000c8" stroke-width="1.15" fill="none"/>
<text x="293.8" y="593.1" font-family="Liberation Sans, sans-serif" font-size="10.2" fill="#f2f2f2" textLength="29.2" lengthAdjust="spacingAndGlyphs">NƯỚC</text>
<text x="695.6" y="594.0" font-family="Liberation Sans, sans-serif" font-size="10" fill="#f2f2f2" letter-spacing="0.2">0.30</text>
<path d="M352 628.4 H684" stroke="#484848" stroke-width="1.15" fill="none"/>
<text x="293.8" y="627.7" font-family="Liberation Sans, sans-serif" font-size="10.2" fill="#f2f2f2" textLength="30.8" lengthAdjust="spacingAndGlyphs">KHUẤT</text>
<text x="695.6" y="627.9" font-family="Liberation Sans, sans-serif" font-size="10" fill="#f2f2f2" letter-spacing="0.2">0.10</text>
<path d="M351 660.4 H684" stroke="#e000e0" stroke-width="1.15" fill="none"/>
<text x="293.8" y="662.7" font-family="Liberation Sans, sans-serif" font-size="10.2" fill="#f2f2f2" textLength="42.5" lengthAdjust="spacingAndGlyphs">BÊ TÔNG</text>
<text x="695.6" y="663.9" font-family="Liberation Sans, sans-serif" font-size="10" fill="#f2f2f2" letter-spacing="0.2">0.4</text>
<path d="M350 689.4 H684" stroke="#c08a00" stroke-width="1.15" fill="none"/>
<text x="293.8" y="690.8" font-family="Liberation Sans, sans-serif" font-size="10.2" fill="#f2f2f2" textLength="41.2" lengthAdjust="spacingAndGlyphs">THIẾT BỊ</text>
<text x="695.6" y="695.0" font-family="Liberation Sans, sans-serif" font-size="10" fill="#f2f2f2" letter-spacing="0.2">0.13</text>
<path d="M350 724.4 H684" stroke="#3f6f6f" stroke-width="1.15" fill="none"/>
<text x="293.8" y="725.7" font-family="Liberation Sans, sans-serif" font-size="10.2" fill="#f2f2f2" textLength="20" lengthAdjust="spacingAndGlyphs">CỬA</text>
<text x="695.6" y="727.0" font-family="Liberation Sans, sans-serif" font-size="10" fill="#f2f2f2" letter-spacing="0.2">0.25</text>
<path d="M350 758.4 H684" stroke="#c80000" stroke-width="1.15" fill="none"/>
<text x="293.8" y="760.8" font-family="Liberation Sans, sans-serif" font-size="10.2" fill="#f2f2f2" textLength="26" lengthAdjust="spacingAndGlyphs">NHÁP</text>
<text x="695.6" y="761.8" font-family="Liberation Sans, sans-serif" font-size="10" fill="#f2f2f2" letter-spacing="0.2">0.00</text>
</g>
<path d="M737 212.6 H1536" stroke="#ececec" stroke-width="1.4" shape-rendering="auto"/><path d="M737 776.5 H1536" stroke="#ececec" stroke-width="1.25" shape-rendering="auto"/><path d="M737.5 212 V777 M1535.5 212 V777" stroke="#e4e4e4" stroke-width="1"/>
<rect x="764" y="223" width="760.5" height="543" fill="none" stroke="#252525" stroke-width="2"/>
<rect x="767.5" y="226.5" width="754" height="536" fill="none" stroke="#00d8e0" stroke-width="1.3"/>
<rect x="776" y="236" width="13" height="25" fill="#d2d2d2"/>
<text x="783.2" y="256.3" font-family="Liberation Sans, sans-serif" font-size="22" fill="#ff1010" stroke="#ff1010" stroke-width="0.4" text-anchor="middle" shape-rendering="auto">1</text>
<g shape-rendering="auto">
<path d="M803.5 274 H820 L811.7 282 Z" fill="#fff"/><circle cx="811.7" cy="273.5" r="5" fill="#000" stroke="#fff" stroke-width="1"/>
<text x="811.7" y="276.5" font-family="Liberation Sans, sans-serif" font-size="7" font-weight="bold" fill="#fff" text-anchor="middle">A</text>
<circle cx="811.5" cy="300" r="6" fill="none" stroke="#e6e6e6" stroke-width="2.2"/><path d="M811.5 289 V293 M811.5 307 V311 M801 300 H805 M818 300 H822" stroke="#ddd" stroke-width="1"/>
<text x="811.5" y="303.5" font-family="Liberation Sans, sans-serif" font-size="9" font-weight="bold" fill="#fff" text-anchor="middle">1</text><rect x="809" y="297" width="2" height="6.5" fill="#fff"/><rect x="812" y="297" width="2" height="6.5" fill="#fff"/>
<path d="M807 335 H816 M811.5 323 V335 M811.5 330 H827 M811.5 334 l-2 -3.5 M811.5 334 l2 -3.5" stroke="#ddd" stroke-width="1" fill="none"/>
<text x="820" y="329" font-family="Liberation Sans, sans-serif" font-size="4.5" font-weight="bold" fill="#ddd" text-anchor="middle">±0.00</text>
<path d="M808.5 350 V365 M829.5 350 V365 M808 351.5 H830" stroke="#eee" stroke-width="1" fill="none"/><rect x="808.5" y="368" width="1" height="1" fill="#aaa"/><rect x="829" y="368" width="1" height="1" fill="#aaa"/>
<text x="819" y="350.5" font-family="Liberation Sans, sans-serif" font-size="5.5" font-weight="bold" fill="#00e000" text-anchor="middle">11</text>
</g>
<path d="M1426.5 227 V762" stroke="#e2e2e2" stroke-width="1.2"/>
<path d="M1426.5 238.7 H1521" stroke="#e2e2e2" stroke-width="1.2"/>
<path d="M1426.5 248 H1521" stroke="#bdbdbd" stroke-width="1.4"/>
<path d="M1426.5 269.3 H1521" stroke="#e2e2e2" stroke-width="1.2"/>
<path d="M1426.5 290.5 H1521" stroke="#e2e2e2" stroke-width="1.2"/>
<path d="M1426.5 311.7 H1521" stroke="#e2e2e2" stroke-width="1.2"/>
<path d="M1426.5 332.7 H1521" stroke="#e2e2e2" stroke-width="1.2"/>
<path d="M1426.5 353.3 H1521" stroke="#e2e2e2" stroke-width="1.2"/>
<path d="M1437.5 239 V353" stroke="#e2e2e2" stroke-width="1.2"/>
<path d="M1456 239 V353" stroke="#e2e2e2" stroke-width="1.5"/>
<text x="1428" y="237" font-family="Liberation Sans, sans-serif" font-size="5.6" fill="#d0d0d0" text-anchor="start" shape-rendering="auto" >Ghi chú:</text>
<text x="1429" y="246.2" font-family="Liberation Sans, sans-serif" font-size="5.6" fill="#d0d0d0" text-anchor="start" shape-rendering="auto" >TT</text>
<text x="1439.5" y="246.2" font-family="Liberation Sans, sans-serif" font-size="5.6" fill="#d0d0d0" text-anchor="start" shape-rendering="auto" >Ngày</text>
<text x="1467" y="246.2" font-family="Liberation Sans, sans-serif" font-size="5.6" fill="#d0d0d0" text-anchor="start" shape-rendering="auto" >Tóm tắt</text>
<path d="M1428 258.5 H1435 M1441 258.5 H1451 M1467 258.5 H1517" stroke="#cfcfcf" stroke-width="0.8" stroke-dasharray="0.7 0.7"/>
<path d="M1428 279.5 H1435 M1441 279.5 H1451 M1467 279.5 H1517" stroke="#cfcfcf" stroke-width="0.8" stroke-dasharray="0.7 0.7"/>
<path d="M1428 300.5 H1435 M1441 300.5 H1451 M1467 300.5 H1517" stroke="#cfcfcf" stroke-width="0.8" stroke-dasharray="0.7 0.7"/>
<path d="M1428 321.7 H1435 M1441 321.7 H1451 M1467 321.7 H1517" stroke="#cfcfcf" stroke-width="0.8" stroke-dasharray="0.7 0.7"/>
<path d="M1428 342.7 H1435 M1441 342.7 H1451 M1467 342.7 H1517" stroke="#cfcfcf" stroke-width="0.8" stroke-dasharray="0.7 0.7"/>
<g shape-rendering="auto">
<text x="1469.5" y="421" font-family="Liberation Sans, sans-serif" font-size="17.5" fill="#1f66b8" text-anchor="middle" textLength="67" lengthAdjust="spacingAndGlyphs">MONDP</text>
<text transform="translate(1465.5 405.5) rotate(-90)" font-family="Liberation Sans, sans-serif" font-size="17.5" font-weight="bold" fill="#1f66b8" text-anchor="middle" textLength="67" lengthAdjust="spacingAndGlyphs">MONDP</text>
<circle cx="1459.5" cy="415" r="6.2" fill="none" stroke="#8fa0b8" stroke-width="1.4"/>
</g>
<rect x="1426" y="447.5" width="95" height="47.4" fill="#fff"/>
<g shape-rendering="auto">
<text transform="translate(1429.4 484.7) scale(1.72 5.13)" font-family="Liberation Sans, sans-serif" font-weight="bold" font-size="10" fill="#c6c6c6">CAD</text>
<text transform="translate(1468.6 484.7) scale(2.0 4.9)" font-family="Liberation Sans, sans-serif" font-weight="bold" font-size="10" fill="#ffc8c8">FULL</text>
<text transform="translate(1429.6 469.7) scale(1.72 2.6)" font-family="Liberation Sans, sans-serif" font-weight="bold" font-size="10" fill="#000">CAD</text>
<text transform="translate(1468.6 481.5) scale(2.0 2.42)" font-family="Liberation Sans, sans-serif" font-weight="bold" font-size="10" fill="#fb0000">FULL</text>
<text x="1431.6" y="492" font-family="Liberation Sans, sans-serif" font-style="italic" font-weight="bold" font-size="5.4" fill="#111" textLength="86.5" lengthAdjust="spacingAndGlyphs">THƯ VIỆN TIỆN ÍCH DÀNH CHO BẠN</text>
</g>
<text x="1430" y="503" font-family="Liberation Sans, sans-serif" font-size="5.6" fill="#d0d0d0" text-anchor="start" shape-rendering="auto" >Công trình:</text>
<text x="1430" y="523" font-family="Liberation Sans, sans-serif" font-size="5.6" fill="#d0d0d0" text-anchor="start" shape-rendering="auto" >Chủ đầu tư:</text>
<text x="1430" y="544" font-family="Liberation Sans, sans-serif" font-size="5.6" fill="#d0d0d0" text-anchor="start" shape-rendering="auto" >Địa chỉ:</text>
<path d="M1426.5 566 H1521" stroke="#e2e2e2" stroke-width="1.2"/>
<path d="M1426.5 588.8 H1521" stroke="#e2e2e2" stroke-width="1.2"/>
<path d="M1426.5 611.8 H1521" stroke="#e2e2e2" stroke-width="1.2"/>
<path d="M1426.5 634.5 H1521" stroke="#e2e2e2" stroke-width="1.2"/>
<path d="M1426.5 657.5 H1521" stroke="#e2e2e2" stroke-width="1.2"/>
<path d="M1426.5 680.2 H1521" stroke="#e2e2e2" stroke-width="1.2"/>
<path d="M1426.5 703 H1521" stroke="#e2e2e2" stroke-width="1.2"/>
<path d="M1426.5 725.8 H1521" stroke="#e2e2e2" stroke-width="1.2"/>
<path d="M1456 566 V762" stroke="#e2e2e2" stroke-width="1.5"/>
<text x="1428.5" y="574.5" font-family="Liberation Sans, sans-serif" font-size="5.6" fill="#d0d0d0" text-anchor="start" shape-rendering="auto" >Hạng mục</text>
<text x="1428.5" y="597.3" font-family="Liberation Sans, sans-serif" font-size="5.6" fill="#d0d0d0" text-anchor="start" shape-rendering="auto" >Bản vẽ:</text>
<text x="1428.5" y="620.3" font-family="Liberation Sans, sans-serif" font-size="5.6" fill="#d0d0d0" text-anchor="start" shape-rendering="auto" >Giám đốc</text>
<text x="1428.5" y="643.0" font-family="Liberation Sans, sans-serif" font-size="5.6" fill="#d0d0d0" text-anchor="start" shape-rendering="auto" >Chủ trì</text>
<text x="1428.5" y="666.0" font-family="Liberation Sans, sans-serif" font-size="5.6" fill="#d0d0d0" text-anchor="start" shape-rendering="auto" >Thiết kế</text>
<text x="1428.5" y="688.7" font-family="Liberation Sans, sans-serif" font-size="5.6" fill="#d0d0d0" text-anchor="start" shape-rendering="auto" >Vẽ</text>
<text x="1428.5" y="711.5" font-family="Liberation Sans, sans-serif" font-size="5.6" fill="#d0d0d0" text-anchor="start" shape-rendering="auto" >Kiểm</text>
<text x="1428.5" y="734.3" font-family="Liberation Sans, sans-serif" font-size="5.6" fill="#d0d0d0" text-anchor="start" shape-rendering="auto" >Ngày:</text>
<text x="1459" y="734.3" font-family="Liberation Sans, sans-serif" font-size="5.6" fill="#d0d0d0" text-anchor="start" shape-rendering="auto" >Ký hiệu:</text>
<path d="M1426.5 743.8 H1456" stroke="#e2e2e2" stroke-width="1.2"/>
<text x="1429.5" y="750.5" font-family="Liberation Sans, sans-serif" font-size="5.6" fill="#d0d0d0" text-anchor="start" shape-rendering="auto" >Tỷ lệ:</text>
<path d="M1429 759 H1449" stroke="#cfcfcf" stroke-width="0.8" stroke-dasharray="0.7 0.7"/>
<text x="1498" y="604" font-family="Liberation Sans, sans-serif" font-size="8.2" fill="#ececec" text-anchor="middle" shape-rendering="auto" >MẶT BẰNG</text>
<text x="1487" y="747" font-family="Liberation Sans, sans-serif" font-size="8.5" fill="#ececec" text-anchor="middle" shape-rendering="auto" >NT</text>
<path d="M228.5 818 V849" stroke="#e6e6e6" stroke-width="1"/>
<path d="M229 801 L235.5 807 L242 801 M235.5 807 V813" stroke="#e6e6e6" stroke-width="1.2" fill="none" shape-rendering="auto"/>
</svg>
<div class="abs" style="left:553px;top:88px;width:85px;height:29px;background:#2b2b2b;color:#0e0e0e;font-size:13px;line-height:30px;padding-left:4.5px;white-space:nowrap"><span style="display:inline-block;transform-origin:0 50%;transform:scaleX(0.935);white-space:nowrap">Layer Control</span></div>
<div class="abs" style="left:262px;top:57px;width:300px;height:22px;background:#cce4f7;border:1px solid #0078d7;color:#000"><svg class="abs" style="left:2px;top:2px" width="76" height="16" viewBox="0 0 76 16"><circle cx="9.1" cy="5.9" r="5" fill="#f7a10c"/><path d="M7.2 11 H10.9 V13.2 Q10.9 14.6 9.05 14.6 Q7.2 14.6 7.2 13.2 Z" fill="#77777f"/><circle cx="25.5" cy="7.4" r="4.3" fill="#f7a10c"/><path d="M25.5 0 V1.8 M25.5 13 V14.8 M18.2 7.4 H20 M31 7.4 H32.8 M20.3 2.2 L21.7 3.6 M29.3 11.2 L30.7 12.6 M20.3 12.6 L21.7 11.2 M29.3 3.6 L30.7 2.2" stroke="#f7a10c" stroke-width="1.1"/><rect x="41.8" y="2.6" width="8.6" height="8.6" fill="#e9e9e9"/><path d="M39.7 3.5 V0.8 H42.8 M49.5 0.8 H52.3 V3.5 M39.7 10.5 V13.2 H42.8" stroke="#5a5a5a" stroke-width="1" fill="none"/><path d="M41.7 10.8 V2.5 H50.4 V7" stroke="#5a5a5a" stroke-width="1.1" fill="none"/><path d="M41.7 11.2 H45" stroke="#5a5a5a" stroke-width="1.1"/><circle cx="50.4" cy="11.3" r="2.3" fill="#f7a10c"/><path d="M50.4 7.3 V8.2 M50.4 14.4 V15.3 M46.4 11.3 H47.3 M53.5 11.3 H54.4 M47.6 8.5 l0.6 0.6 M52.6 13.5 l0.6 0.6 M47.6 14.1 l0.6 -0.6 M52.6 9.1 l0.6 -0.6" stroke="#f7a10c" stroke-width="0.9"/><rect x="59" y="6.2" width="10.9" height="8.4" fill="#f7a10c"/><rect x="63.9" y="9" width="1.2" height="3" fill="#fff"/><path d="M67.2 6.2 V3.6 Q67.2 1.1 69.6 1.1 Q72 1.1 72 3.6 V5.7" stroke="#f7a10c" stroke-width="1.5" fill="none"/></svg><span class="sw" style="left:79px;top:4px;width:13px;height:13px;background:#fff"></span><span class="abs" style="left:97.3px;top:2px;line-height:16px">0</span><svg class="abs" style="left:287.7px;top:7.5px" width="8" height="5" viewBox="0 0 8 5"><path d="M0.5 0.6 L4 4.1 L7.5 0.6" stroke="#333" stroke-width="1.1" fill="none"/></svg><span class="abs" style="left:-1px;top:-1px;width:1px;height:1px;background:#fff"></span><span class="abs" style="left:-1px;top:20px;width:1px;height:1px;background:#fff"></span><span class="abs" style="left:298px;top:-1px;width:1px;height:1px;background:#fff"></span><span class="abs" style="left:298px;top:20px;width:1px;height:1px;background:#fff"></span></div>
<div id="dd">
<div class="lrow" style="top:0px"><svg class="abs" style="left:3px;top:0px" width="76" height="16" viewBox="0 0 76 16"><circle cx="9.1" cy="5.9" r="5" fill="#f7a10c"/><path d="M7.2 11 H10.9 V13.2 Q10.9 14.6 9.05 14.6 Q7.2 14.6 7.2 13.2 Z" fill="#77777f"/><circle cx="25.5" cy="7.4" r="4.3" fill="#f7a10c"/><path d="M25.5 0 V1.8 M25.5 13 V14.8 M18.2 7.4 H20 M31 7.4 H32.8 M20.3 2.2 L21.7 3.6 M29.3 11.2 L30.7 12.6 M20.3 12.6 L21.7 11.2 M29.3 3.6 L30.7 2.2" stroke="#f7a10c" stroke-width="1.1"/><rect x="41.8" y="2.6" width="8.6" height="8.6" fill="#e9e9e9"/><path d="M39.7 3.5 V0.8 H42.8 M49.5 0.8 H52.3 V3.5 M39.7 10.5 V13.2 H42.8" stroke="#5a5a5a" stroke-width="1" fill="none"/><path d="M41.7 10.8 V2.5 H50.4 V7" stroke="#5a5a5a" stroke-width="1.1" fill="none"/><path d="M41.7 11.2 H45" stroke="#5a5a5a" stroke-width="1.1"/><circle cx="50.4" cy="11.3" r="2.3" fill="#f7a10c"/><path d="M50.4 7.3 V8.2 M50.4 14.4 V15.3 M46.4 11.3 H47.3 M53.5 11.3 H54.4 M47.6 8.5 l0.6 0.6 M52.6 13.5 l0.6 0.6 M47.6 14.1 l0.6 -0.6 M52.6 9.1 l0.6 -0.6" stroke="#f7a10c" stroke-width="0.9"/><rect x="59" y="6.2" width="10.9" height="8.4" fill="#f7a10c"/><rect x="63.9" y="9" width="1.2" height="3" fill="#fff"/><path d="M67.2 6.2 V3.6 Q67.2 1.1 69.6 1.1 Q72 1.1 72 3.6 V5.7" stroke="#f7a10c" stroke-width="1.5" fill="none"/></svg><span class="sw" style="background:#fff"></span><span class="abs" style="left:96px;top:0;width:183px;height:16px;background:#0078d7;outline:1px dotted #101010;outline-offset:-1px"></span><span class="t" style="color:#fff"><span style="display:inline-block;transform-origin:0 50%;transform:scaleX(0.824);white-space:nowrap">0</span></span></div>
<div class="lrow" style="top:16px"><svg class="abs" style="left:3px;top:0px" width="76" height="16" viewBox="0 0 76 16"><circle cx="9.1" cy="5.9" r="5" fill="#f7a10c"/><path d="M7.2 11 H10.9 V13.2 Q10.9 14.6 9.05 14.6 Q7.2 14.6 7.2 13.2 Z" fill="#77777f"/><circle cx="25.5" cy="7.4" r="4.3" fill="#f7a10c"/><path d="M25.5 0 V1.8 M25.5 13 V14.8 M18.2 7.4 H20 M31 7.4 H32.8 M20.3 2.2 L21.7 3.6 M29.3 11.2 L30.7 12.6 M20.3 12.6 L21.7 11.2 M29.3 3.6 L30.7 2.2" stroke="#f7a10c" stroke-width="1.1"/><rect x="41.8" y="2.6" width="8.6" height="8.6" fill="#e9e9e9"/><path d="M39.7 3.5 V0.8 H42.8 M49.5 0.8 H52.3 V3.5 M39.7 10.5 V13.2 H42.8" stroke="#5a5a5a" stroke-width="1" fill="none"/><path d="M41.7 10.8 V2.5 H50.4 V7" stroke="#5a5a5a" stroke-width="1.1" fill="none"/><path d="M41.7 11.2 H45" stroke="#5a5a5a" stroke-width="1.1"/><circle cx="50.4" cy="11.3" r="2.3" fill="#f7a10c"/><path d="M50.4 7.3 V8.2 M50.4 14.4 V15.3 M46.4 11.3 H47.3 M53.5 11.3 H54.4 M47.6 8.5 l0.6 0.6 M52.6 13.5 l0.6 0.6 M47.6 14.1 l0.6 -0.6 M52.6 9.1 l0.6 -0.6" stroke="#f7a10c" stroke-width="0.9"/><rect x="59" y="6.2" width="10.9" height="8.4" fill="#f7a10c"/><rect x="63.9" y="9" width="1.2" height="3" fill="#fff"/><path d="M67.2 6.2 V3.6 Q67.2 1.1 69.6 1.1 Q72 1.1 72 3.6 V5.7" stroke="#f7a10c" stroke-width="1.5" fill="none"/></svg><span class="sw" style="background:#fff"></span><span class="t"><span style="display:inline-block;transform-origin:0 50%;transform:scaleX(1.006);white-space:nowrap">Defpoints</span></span></div>
<div class="lrow" style="top:32px"><svg class="abs" style="left:3px;top:0px" width="76" height="16" viewBox="0 0 76 16"><circle cx="9.1" cy="5.9" r="5" fill="#f7a10c"/><path d="M7.2 11 H10.9 V13.2 Q10.9 14.6 9.05 14.6 Q7.2 14.6 7.2 13.2 Z" fill="#77777f"/><circle cx="25.5" cy="7.4" r="4.3" fill="#f7a10c"/><path d="M25.5 0 V1.8 M25.5 13 V14.8 M18.2 7.4 H20 M31 7.4 H32.8 M20.3 2.2 L21.7 3.6 M29.3 11.2 L30.7 12.6 M20.3 12.6 L21.7 11.2 M29.3 3.6 L30.7 2.2" stroke="#f7a10c" stroke-width="1.1"/><rect x="41.8" y="2.6" width="8.6" height="8.6" fill="#e9e9e9"/><path d="M39.7 3.5 V0.8 H42.8 M49.5 0.8 H52.3 V3.5 M39.7 10.5 V13.2 H42.8" stroke="#5a5a5a" stroke-width="1" fill="none"/><path d="M41.7 10.8 V2.5 H50.4 V7" stroke="#5a5a5a" stroke-width="1.1" fill="none"/><path d="M41.7 11.2 H45" stroke="#5a5a5a" stroke-width="1.1"/><circle cx="50.4" cy="11.3" r="2.3" fill="#f7a10c"/><path d="M50.4 7.3 V8.2 M50.4 14.4 V15.3 M46.4 11.3 H47.3 M53.5 11.3 H54.4 M47.6 8.5 l0.6 0.6 M52.6 13.5 l0.6 0.6 M47.6 14.1 l0.6 -0.6 M52.6 9.1 l0.6 -0.6" stroke="#f7a10c" stroke-width="0.9"/><rect x="59" y="6.2" width="10.9" height="8.4" fill="#f7a10c"/><rect x="63.9" y="9" width="1.2" height="3" fill="#fff"/><path d="M67.2 6.2 V3.6 Q67.2 1.1 69.6 1.1 Q72 1.1 72 3.6 V5.7" stroke="#f7a10c" stroke-width="1.5" fill="none"/></svg><span class="sw" style="background:#ff00ff"></span><span class="t"><span style="display:inline-block;transform-origin:0 50%;transform:scaleX(0.913);white-space:nowrap">PTK_Be tong</span></span></div>
<div class="lrow" style="top:48px"><svg class="abs" style="left:3px;top:0px" width="76" height="16" viewBox="0 0 76 16"><circle cx="9.1" cy="5.9" r="5" fill="#f7a10c"/><path d="M7.2 11 H10.9 V13.2 Q10.9 14.6 9.05 14.6 Q7.2 14.6 7.2 13.2 Z" fill="#77777f"/><circle cx="25.5" cy="7.4" r="4.3" fill="#f7a10c"/><path d="M25.5 0 V1.8 M25.5 13 V14.8 M18.2 7.4 H20 M31 7.4 H32.8 M20.3 2.2 L21.7 3.6 M29.3 11.2 L30.7 12.6 M20.3 12.6 L21.7 11.2 M29.3 3.6 L30.7 2.2" stroke="#f7a10c" stroke-width="1.1"/><rect x="41.8" y="2.6" width="8.6" height="8.6" fill="#e9e9e9"/><path d="M39.7 3.5 V0.8 H42.8 M49.5 0.8 H52.3 V3.5 M39.7 10.5 V13.2 H42.8" stroke="#5a5a5a" stroke-width="1" fill="none"/><path d="M41.7 10.8 V2.5 H50.4 V7" stroke="#5a5a5a" stroke-width="1.1" fill="none"/><path d="M41.7 11.2 H45" stroke="#5a5a5a" stroke-width="1.1"/><circle cx="50.4" cy="11.3" r="2.3" fill="#f7a10c"/><path d="M50.4 7.3 V8.2 M50.4 14.4 V15.3 M46.4 11.3 H47.3 M53.5 11.3 H54.4 M47.6 8.5 l0.6 0.6 M52.6 13.5 l0.6 0.6 M47.6 14.1 l0.6 -0.6 M52.6 9.1 l0.6 -0.6" stroke="#f7a10c" stroke-width="0.9"/><rect x="59" y="6.2" width="10.9" height="8.4" fill="#f7a10c"/><rect x="63.9" y="9" width="1.2" height="3" fill="#fff"/><path d="M67.2 6.2 V3.6 Q67.2 1.1 69.6 1.1 Q72 1.1 72 3.6 V5.7" stroke="#f7a10c" stroke-width="1.5" fill="none"/></svg><span class="sw" style="background:#00ff00"></span><span class="t"><span style="display:inline-block;transform-origin:0 50%;transform:scaleX(0.867);white-space:nowrap">PTK_Cay</span></span></div>
<div class="lrow" style="top:64px"><svg class="abs" style="left:3px;top:0px" width="76" height="16" viewBox="0 0 76 16"><circle cx="9.1" cy="5.9" r="5" fill="#f7a10c"/><path d="M7.2 11 H10.9 V13.2 Q10.9 14.6 9.05 14.6 Q7.2 14.6 7.2 13.2 Z" fill="#77777f"/><circle cx="25.5" cy="7.4" r="4.3" fill="#f7a10c"/><path d="M25.5 0 V1.8 M25.5 13 V14.8 M18.2 7.4 H20 M31 7.4 H32.8 M20.3 2.2 L21.7 3.6 M29.3 11.2 L30.7 12.6 M20.3 12.6 L21.7 11.2 M29.3 3.6 L30.7 2.2" stroke="#f7a10c" stroke-width="1.1"/><rect x="41.8" y="2.6" width="8.6" height="8.6" fill="#e9e9e9"/><path d="M39.7 3.5 V0.8 H42.8 M49.5 0.8 H52.3 V3.5 M39.7 10.5 V13.2 H42.8" stroke="#5a5a5a" stroke-width="1" fill="none"/><path d="M41.7 10.8 V2.5 H50.4 V7" stroke="#5a5a5a" stroke-width="1.1" fill="none"/><path d="M41.7 11.2 H45" stroke="#5a5a5a" stroke-width="1.1"/><circle cx="50.4" cy="11.3" r="2.3" fill="#f7a10c"/><path d="M50.4 7.3 V8.2 M50.4 14.4 V15.3 M46.4 11.3 H47.3 M53.5 11.3 H54.4 M47.6 8.5 l0.6 0.6 M52.6 13.5 l0.6 0.6 M47.6 14.1 l0.6 -0.6 M52.6 9.1 l0.6 -0.6" stroke="#f7a10c" stroke-width="0.9"/><rect x="59" y="6.2" width="10.9" height="8.4" fill="#f7a10c"/><rect x="63.9" y="9" width="1.2" height="3" fill="#fff"/><path d="M67.2 6.2 V3.6 Q67.2 1.1 69.6 1.1 Q72 1.1 72 3.6 V5.7" stroke="#f7a10c" stroke-width="1.5" fill="none"/></svg><span class="sw" style="background:#3f7f7f"></span><span class="t"><span style="display:inline-block;transform-origin:0 50%;transform:scaleX(0.871);white-space:nowrap">PTK_Cua</span></span></div>
<div class="lrow" style="top:80px"><svg class="abs" style="left:3px;top:0px" width="76" height="16" viewBox="0 0 76 16"><circle cx="9.1" cy="5.9" r="5" fill="#f7a10c"/><path d="M7.2 11 H10.9 V13.2 Q10.9 14.6 9.05 14.6 Q7.2 14.6 7.2 13.2 Z" fill="#77777f"/><circle cx="25.5" cy="7.4" r="4.3" fill="#f7a10c"/><path d="M25.5 0 V1.8 M25.5 13 V14.8 M18.2 7.4 H20 M31 7.4 H32.8 M20.3 2.2 L21.7 3.6 M29.3 11.2 L30.7 12.6 M20.3 12.6 L21.7 11.2 M29.3 3.6 L30.7 2.2" stroke="#f7a10c" stroke-width="1.1"/><rect x="41.8" y="2.6" width="8.6" height="8.6" fill="#e9e9e9"/><path d="M39.7 3.5 V0.8 H42.8 M49.5 0.8 H52.3 V3.5 M39.7 10.5 V13.2 H42.8" stroke="#5a5a5a" stroke-width="1" fill="none"/><path d="M41.7 10.8 V2.5 H50.4 V7" stroke="#5a5a5a" stroke-width="1.1" fill="none"/><path d="M41.7 11.2 H45" stroke="#5a5a5a" stroke-width="1.1"/><circle cx="50.4" cy="11.3" r="2.3" fill="#f7a10c"/><path d="M50.4 7.3 V8.2 M50.4 14.4 V15.3 M46.4 11.3 H47.3 M53.5 11.3 H54.4 M47.6 8.5 l0.6 0.6 M52.6 13.5 l0.6 0.6 M47.6 14.1 l0.6 -0.6 M52.6 9.1 l0.6 -0.6" stroke="#f7a10c" stroke-width="0.9"/><rect x="59" y="6.2" width="10.9" height="8.4" fill="#f7a10c"/><rect x="63.9" y="9" width="1.2" height="3" fill="#fff"/><path d="M67.2 6.2 V3.6 Q67.2 1.1 69.6 1.1 Q72 1.1 72 3.6 V5.7" stroke="#f7a10c" stroke-width="1.5" fill="none"/></svg><span class="sw" style="background:#ff00ff"></span><span class="t"><span style="display:inline-block;transform-origin:0 50%;transform:scaleX(0.883);white-space:nowrap">PTK_Dien</span></span></div>
<div class="lrow" style="top:96px"><svg class="abs" style="left:3px;top:0px" width="76" height="16" viewBox="0 0 76 16"><circle cx="9.1" cy="5.9" r="5" fill="#f7a10c"/><path d="M7.2 11 H10.9 V13.2 Q10.9 14.6 9.05 14.6 Q7.2 14.6 7.2 13.2 Z" fill="#77777f"/><circle cx="25.5" cy="7.4" r="4.3" fill="#f7a10c"/><path d="M25.5 0 V1.8 M25.5 13 V14.8 M18.2 7.4 H20 M31 7.4 H32.8 M20.3 2.2 L21.7 3.6 M29.3 11.2 L30.7 12.6 M20.3 12.6 L21.7 11.2 M29.3 3.6 L30.7 2.2" stroke="#f7a10c" stroke-width="1.1"/><rect x="41.8" y="2.6" width="8.6" height="8.6" fill="#e9e9e9"/><path d="M39.7 3.5 V0.8 H42.8 M49.5 0.8 H52.3 V3.5 M39.7 10.5 V13.2 H42.8" stroke="#5a5a5a" stroke-width="1" fill="none"/><path d="M41.7 10.8 V2.5 H50.4 V7" stroke="#5a5a5a" stroke-width="1.1" fill="none"/><path d="M41.7 11.2 H45" stroke="#5a5a5a" stroke-width="1.1"/><circle cx="50.4" cy="11.3" r="2.3" fill="#f7a10c"/><path d="M50.4 7.3 V8.2 M50.4 14.4 V15.3 M46.4 11.3 H47.3 M53.5 11.3 H54.4 M47.6 8.5 l0.6 0.6 M52.6 13.5 l0.6 0.6 M47.6 14.1 l0.6 -0.6 M52.6 9.1 l0.6 -0.6" stroke="#f7a10c" stroke-width="0.9"/><rect x="59" y="6.2" width="10.9" height="8.4" fill="#f7a10c"/><rect x="63.9" y="9" width="1.2" height="3" fill="#fff"/><path d="M67.2 6.2 V3.6 Q67.2 1.1 69.6 1.1 Q72 1.1 72 3.6 V5.7" stroke="#f7a10c" stroke-width="1.5" fill="none"/></svg><span class="sw" style="background:#808080"></span><span class="t"><span style="display:inline-block;transform-origin:0 50%;transform:scaleX(0.904);white-space:nowrap">PTK_Dim</span></span></div>
<div class="lrow" style="top:112px"><svg class="abs" style="left:3px;top:0px" width="76" height="16" viewBox="0 0 76 16"><circle cx="9.1" cy="5.9" r="5" fill="#f7a10c"/><path d="M7.2 11 H10.9 V13.2 Q10.9 14.6 9.05 14.6 Q7.2 14.6 7.2 13.2 Z" fill="#77777f"/><circle cx="25.5" cy="7.4" r="4.3" fill="#f7a10c"/><path d="M25.5 0 V1.8 M25.5 13 V14.8 M18.2 7.4 H20 M31 7.4 H32.8 M20.3 2.2 L21.7 3.6 M29.3 11.2 L30.7 12.6 M20.3 12.6 L21.7 11.2 M29.3 3.6 L30.7 2.2" stroke="#f7a10c" stroke-width="1.1"/><rect x="41.8" y="2.6" width="8.6" height="8.6" fill="#e9e9e9"/><path d="M39.7 3.5 V0.8 H42.8 M49.5 0.8 H52.3 V3.5 M39.7 10.5 V13.2 H42.8" stroke="#5a5a5a" stroke-width="1" fill="none"/><path d="M41.7 10.8 V2.5 H50.4 V7" stroke="#5a5a5a" stroke-width="1.1" fill="none"/><path d="M41.7 11.2 H45" stroke="#5a5a5a" stroke-width="1.1"/><circle cx="50.4" cy="11.3" r="2.3" fill="#f7a10c"/><path d="M50.4 7.3 V8.2 M50.4 14.4 V15.3 M46.4 11.3 H47.3 M53.5 11.3 H54.4 M47.6 8.5 l0.6 0.6 M52.6 13.5 l0.6 0.6 M47.6 14.1 l0.6 -0.6 M52.6 9.1 l0.6 -0.6" stroke="#f7a10c" stroke-width="0.9"/><rect x="59" y="6.2" width="10.9" height="8.4" fill="#f7a10c"/><rect x="63.9" y="9" width="1.2" height="3" fill="#fff"/><path d="M67.2 6.2 V3.6 Q67.2 1.1 69.6 1.1 Q72 1.1 72 3.6 V5.7" stroke="#f7a10c" stroke-width="1.5" fill="none"/></svg><span class="sw" style="background:#333333"></span><span class="t"><span style="display:inline-block;transform-origin:0 50%;transform:scaleX(0.916);white-space:nowrap">PTK_Hatch</span></span></div>
<div class="lrow" style="top:128px"><svg class="abs" style="left:3px;top:0px" width="76" height="16" viewBox="0 0 76 16"><circle cx="9.1" cy="5.9" r="5" fill="#f7a10c"/><path d="M7.2 11 H10.9 V13.2 Q10.9 14.6 9.05 14.6 Q7.2 14.6 7.2 13.2 Z" fill="#77777f"/><circle cx="25.5" cy="7.4" r="4.3" fill="#f7a10c"/><path d="M25.5 0 V1.8 M25.5 13 V14.8 M18.2 7.4 H20 M31 7.4 H32.8 M20.3 2.2 L21.7 3.6 M29.3 11.2 L30.7 12.6 M20.3 12.6 L21.7 11.2 M29.3 3.6 L30.7 2.2" stroke="#f7a10c" stroke-width="1.1"/><rect x="41.8" y="2.6" width="8.6" height="8.6" fill="#e9e9e9"/><path d="M39.7 3.5 V0.8 H42.8 M49.5 0.8 H52.3 V3.5 M39.7 10.5 V13.2 H42.8" stroke="#5a5a5a" stroke-width="1" fill="none"/><path d="M41.7 10.8 V2.5 H50.4 V7" stroke="#5a5a5a" stroke-width="1.1" fill="none"/><path d="M41.7 11.2 H45" stroke="#5a5a5a" stroke-width="1.1"/><circle cx="50.4" cy="11.3" r="2.3" fill="#f7a10c"/><path d="M50.4 7.3 V8.2 M50.4 14.4 V15.3 M46.4 11.3 H47.3 M53.5 11.3 H54.4 M47.6 8.5 l0.6 0.6 M52.6 13.5 l0.6 0.6 M47.6 14.1 l0.6 -0.6 M52.6 9.1 l0.6 -0.6" stroke="#f7a10c" stroke-width="0.9"/><rect x="59" y="6.2" width="10.9" height="8.4" fill="#f7a10c"/><rect x="63.9" y="9" width="1.2" height="3" fill="#fff"/><path d="M67.2 6.2 V3.6 Q67.2 1.1 69.6 1.1 Q72 1.1 72 3.6 V5.7" stroke="#f7a10c" stroke-width="1.5" fill="none"/></svg><span class="sw" style="background:#4c72a5"></span><span class="t"><span style="display:inline-block;transform-origin:0 50%;transform:scaleX(0.918);white-space:nowrap">PTK_Manh</span></span></div>
<div class="lrow" style="top:144px"><svg class="abs" style="left:3px;top:0px" width="76" height="16" viewBox="0 0 76 16"><circle cx="9.1" cy="5.9" r="5" fill="#f7a10c"/><path d="M7.2 11 H10.9 V13.2 Q10.9 14.6 9.05 14.6 Q7.2 14.6 7.2 13.2 Z" fill="#77777f"/><circle cx="25.5" cy="7.4" r="4.3" fill="#f7a10c"/><path d="M25.5 0 V1.8 M25.5 13 V14.8 M18.2 7.4 H20 M31 7.4 H32.8 M20.3 2.2 L21.7 3.6 M29.3 11.2 L30.7 12.6 M20.3 12.6 L21.7 11.2 M29.3 3.6 L30.7 2.2" stroke="#f7a10c" stroke-width="1.1"/><rect x="41.8" y="2.6" width="8.6" height="8.6" fill="#e9e9e9"/><path d="M39.7 3.5 V0.8 H42.8 M49.5 0.8 H52.3 V3.5 M39.7 10.5 V13.2 H42.8" stroke="#5a5a5a" stroke-width="1" fill="none"/><path d="M41.7 10.8 V2.5 H50.4 V7" stroke="#5a5a5a" stroke-width="1.1" fill="none"/><path d="M41.7 11.2 H45" stroke="#5a5a5a" stroke-width="1.1"/><circle cx="50.4" cy="11.3" r="2.3" fill="#f7a10c"/><path d="M50.4 7.3 V8.2 M50.4 14.4 V15.3 M46.4 11.3 H47.3 M53.5 11.3 H54.4 M47.6 8.5 l0.6 0.6 M52.6 13.5 l0.6 0.6 M47.6 14.1 l0.6 -0.6 M52.6 9.1 l0.6 -0.6" stroke="#f7a10c" stroke-width="0.9"/><rect x="59" y="6.2" width="10.9" height="8.4" fill="#f7a10c"/><rect x="63.9" y="9" width="1.2" height="3" fill="#fff"/><path d="M67.2 6.2 V3.6 Q67.2 1.1 69.6 1.1 Q72 1.1 72 3.6 V5.7" stroke="#f7a10c" stroke-width="1.5" fill="none"/></svg><span class="sw" style="background:#00ffff"></span><span class="t"><span style="display:inline-block;transform-origin:0 50%;transform:scaleX(0.920);white-space:nowrap">PTK_Net cat</span></span></div>
<div class="lrow" style="top:160px"><svg class="abs" style="left:3px;top:0px" width="76" height="16" viewBox="0 0 76 16"><circle cx="9.1" cy="5.9" r="5" fill="#f7a10c"/><path d="M7.2 11 H10.9 V13.2 Q10.9 14.6 9.05 14.6 Q7.2 14.6 7.2 13.2 Z" fill="#77777f"/><circle cx="25.5" cy="7.4" r="4.3" fill="#f7a10c"/><path d="M25.5 0 V1.8 M25.5 13 V14.8 M18.2 7.4 H20 M31 7.4 H32.8 M20.3 2.2 L21.7 3.6 M29.3 11.2 L30.7 12.6 M20.3 12.6 L21.7 11.2 M29.3 3.6 L30.7 2.2" stroke="#f7a10c" stroke-width="1.1"/><rect x="41.8" y="2.6" width="8.6" height="8.6" fill="#e9e9e9"/><path d="M39.7 3.5 V0.8 H42.8 M49.5 0.8 H52.3 V3.5 M39.7 10.5 V13.2 H42.8" stroke="#5a5a5a" stroke-width="1" fill="none"/><path d="M41.7 10.8 V2.5 H50.4 V7" stroke="#5a5a5a" stroke-width="1.1" fill="none"/><path d="M41.7 11.2 H45" stroke="#5a5a5a" stroke-width="1.1"/><circle cx="50.4" cy="11.3" r="2.3" fill="#f7a10c"/><path d="M50.4 7.3 V8.2 M50.4 14.4 V15.3 M46.4 11.3 H47.3 M53.5 11.3 H54.4 M47.6 8.5 l0.6 0.6 M52.6 13.5 l0.6 0.6 M47.6 14.1 l0.6 -0.6 M52.6 9.1 l0.6 -0.6" stroke="#f7a10c" stroke-width="0.9"/><rect x="59" y="6.2" width="10.9" height="8.4" fill="#f7a10c"/><rect x="63.9" y="9" width="1.2" height="3" fill="#fff"/><path d="M67.2 6.2 V3.6 Q67.2 1.1 69.6 1.1 Q72 1.1 72 3.6 V5.7" stroke="#f7a10c" stroke-width="1.5" fill="none"/></svg><span class="sw" style="background:#5b5b5b"></span><span class="t"><span style="display:inline-block;transform-origin:0 50%;transform:scaleX(0.940);white-space:nowrap">PTK_Net khuat</span></span></div>
<div class="lrow" style="top:176px"><svg class="abs" style="left:3px;top:0px" width="76" height="16" viewBox="0 0 76 16"><circle cx="9.1" cy="5.9" r="5" fill="#f7a10c"/><path d="M7.2 11 H10.9 V13.2 Q10.9 14.6 9.05 14.6 Q7.2 14.6 7.2 13.2 Z" fill="#77777f"/><circle cx="25.5" cy="7.4" r="4.3" fill="#f7a10c"/><path d="M25.5 0 V1.8 M25.5 13 V14.8 M18.2 7.4 H20 M31 7.4 H32.8 M20.3 2.2 L21.7 3.6 M29.3 11.2 L30.7 12.6 M20.3 12.6 L21.7 11.2 M29.3 3.6 L30.7 2.2" stroke="#f7a10c" stroke-width="1.1"/><rect x="41.8" y="2.6" width="8.6" height="8.6" fill="#e9e9e9"/><path d="M39.7 3.5 V0.8 H42.8 M49.5 0.8 H52.3 V3.5 M39.7 10.5 V13.2 H42.8" stroke="#5a5a5a" stroke-width="1" fill="none"/><path d="M41.7 10.8 V2.5 H50.4 V7" stroke="#5a5a5a" stroke-width="1.1" fill="none"/><path d="M41.7 11.2 H45" stroke="#5a5a5a" stroke-width="1.1"/><circle cx="50.4" cy="11.3" r="2.3" fill="#f7a10c"/><path d="M50.4 7.3 V8.2 M50.4 14.4 V15.3 M46.4 11.3 H47.3 M53.5 11.3 H54.4 M47.6 8.5 l0.6 0.6 M52.6 13.5 l0.6 0.6 M47.6 14.1 l0.6 -0.6 M52.6 9.1 l0.6 -0.6" stroke="#f7a10c" stroke-width="0.9"/><rect x="59" y="6.2" width="10.9" height="8.4" fill="#f7a10c"/><rect x="63.9" y="9" width="1.2" height="3" fill="#fff"/><path d="M67.2 6.2 V3.6 Q67.2 1.1 69.6 1.1 Q72 1.1 72 3.6 V5.7" stroke="#f7a10c" stroke-width="1.5" fill="none"/></svg><span class="sw" style="background:#c0c0c0"></span><span class="t"><span style="display:inline-block;transform-origin:0 50%;transform:scaleX(0.934);white-space:nowrap">PTK_Net thay</span></span></div>
<div class="lrow" style="top:192px"><svg class="abs" style="left:3px;top:0px" width="76" height="16" viewBox="0 0 76 16"><circle cx="9.1" cy="5.9" r="5" fill="#f7a10c"/><path d="M7.2 11 H10.9 V13.2 Q10.9 14.6 9.05 14.6 Q7.2 14.6 7.2 13.2 Z" fill="#77777f"/><circle cx="25.5" cy="7.4" r="4.3" fill="#f7a10c"/><path d="M25.5 0 V1.8 M25.5 13 V14.8 M18.2 7.4 H20 M31 7.4 H32.8 M20.3 2.2 L21.7 3.6 M29.3 11.2 L30.7 12.6 M20.3 12.6 L21.7 11.2 M29.3 3.6 L30.7 2.2" stroke="#f7a10c" stroke-width="1.1"/><rect x="41.8" y="2.6" width="8.6" height="8.6" fill="#e9e9e9"/><path d="M39.7 3.5 V0.8 H42.8 M49.5 0.8 H52.3 V3.5 M39.7 10.5 V13.2 H42.8" stroke="#5a5a5a" stroke-width="1" fill="none"/><path d="M41.7 10.8 V2.5 H50.4 V7" stroke="#5a5a5a" stroke-width="1.1" fill="none"/><path d="M41.7 11.2 H45" stroke="#5a5a5a" stroke-width="1.1"/><circle cx="50.4" cy="11.3" r="2.3" fill="#f7a10c"/><path d="M50.4 7.3 V8.2 M50.4 14.4 V15.3 M46.4 11.3 H47.3 M53.5 11.3 H54.4 M47.6 8.5 l0.6 0.6 M52.6 13.5 l0.6 0.6 M47.6 14.1 l0.6 -0.6 M52.6 9.1 l0.6 -0.6" stroke="#f7a10c" stroke-width="0.9"/><rect x="59" y="6.2" width="10.9" height="8.4" fill="#f7a10c"/><rect x="63.9" y="9" width="1.2" height="3" fill="#fff"/><path d="M67.2 6.2 V3.6 Q67.2 1.1 69.6 1.1 Q72 1.1 72 3.6 V5.7" stroke="#f7a10c" stroke-width="1.5" fill="none"/></svg><span class="sw" style="background:#ff0000"></span><span class="t"><span style="display:inline-block;transform-origin:0 50%;transform:scaleX(0.906);white-space:nowrap">PTK_Nhap</span></span></div>
<div class="lrow" style="top:208px"><svg class="abs" style="left:3px;top:0px" width="76" height="16" viewBox="0 0 76 16"><circle cx="9.1" cy="5.9" r="5" fill="#f7a10c"/><path d="M7.2 11 H10.9 V13.2 Q10.9 14.6 9.05 14.6 Q7.2 14.6 7.2 13.2 Z" fill="#77777f"/><circle cx="25.5" cy="7.4" r="4.3" fill="#f7a10c"/><path d="M25.5 0 V1.8 M25.5 13 V14.8 M18.2 7.4 H20 M31 7.4 H32.8 M20.3 2.2 L21.7 3.6 M29.3 11.2 L30.7 12.6 M20.3 12.6 L21.7 11.2 M29.3 3.6 L30.7 2.2" stroke="#f7a10c" stroke-width="1.1"/><rect x="41.8" y="2.6" width="8.6" height="8.6" fill="#e9e9e9"/><path d="M39.7 3.5 V0.8 H42.8 M49.5 0.8 H52.3 V3.5 M39.7 10.5 V13.2 H42.8" stroke="#5a5a5a" stroke-width="1" fill="none"/><path d="M41.7 10.8 V2.5 H50.4 V7" stroke="#5a5a5a" stroke-width="1.1" fill="none"/><path d="M41.7 11.2 H45" stroke="#5a5a5a" stroke-width="1.1"/><circle cx="50.4" cy="11.3" r="2.3" fill="#f7a10c"/><path d="M50.4 7.3 V8.2 M50.4 14.4 V15.3 M46.4 11.3 H47.3 M53.5 11.3 H54.4 M47.6 8.5 l0.6 0.6 M52.6 13.5 l0.6 0.6 M47.6 14.1 l0.6 -0.6 M52.6 9.1 l0.6 -0.6" stroke="#f7a10c" stroke-width="0.9"/><rect x="59" y="6.2" width="10.9" height="8.4" fill="#f7a10c"/><rect x="63.9" y="9" width="1.2" height="3" fill="#fff"/><path d="M67.2 6.2 V3.6 Q67.2 1.1 69.6 1.1 Q72 1.1 72 3.6 V5.7" stroke="#f7a10c" stroke-width="1.5" fill="none"/></svg><span class="sw" style="background:#cc6600"></span><span class="t"><span style="display:inline-block;transform-origin:0 50%;transform:scaleX(0.946);white-space:nowrap">PTK_Noi that</span></span></div>
<div class="lrow" style="top:224px"><svg class="abs" style="left:3px;top:0px" width="76" height="16" viewBox="0 0 76 16"><circle cx="9.1" cy="5.9" r="5" fill="#f7a10c"/><path d="M7.2 11 H10.9 V13.2 Q10.9 14.6 9.05 14.6 Q7.2 14.6 7.2 13.2 Z" fill="#77777f"/><circle cx="25.5" cy="7.4" r="4.3" fill="#f7a10c"/><path d="M25.5 0 V1.8 M25.5 13 V14.8 M18.2 7.4 H20 M31 7.4 H32.8 M20.3 2.2 L21.7 3.6 M29.3 11.2 L30.7 12.6 M20.3 12.6 L21.7 11.2 M29.3 3.6 L30.7 2.2" stroke="#f7a10c" stroke-width="1.1"/><rect x="41.8" y="2.6" width="8.6" height="8.6" fill="#e9e9e9"/><path d="M39.7 3.5 V0.8 H42.8 M49.5 0.8 H52.3 V3.5 M39.7 10.5 V13.2 H42.8" stroke="#5a5a5a" stroke-width="1" fill="none"/><path d="M41.7 10.8 V2.5 H50.4 V7" stroke="#5a5a5a" stroke-width="1.1" fill="none"/><path d="M41.7 11.2 H45" stroke="#5a5a5a" stroke-width="1.1"/><circle cx="50.4" cy="11.3" r="2.3" fill="#f7a10c"/><path d="M50.4 7.3 V8.2 M50.4 14.4 V15.3 M46.4 11.3 H47.3 M53.5 11.3 H54.4 M47.6 8.5 l0.6 0.6 M52.6 13.5 l0.6 0.6 M47.6 14.1 l0.6 -0.6 M52.6 9.1 l0.6 -0.6" stroke="#f7a10c" stroke-width="0.9"/><rect x="59" y="6.2" width="10.9" height="8.4" fill="#f7a10c"/><rect x="63.9" y="9" width="1.2" height="3" fill="#fff"/><path d="M67.2 6.2 V3.6 Q67.2 1.1 69.6 1.1 Q72 1.1 72 3.6 V5.7" stroke="#f7a10c" stroke-width="1.5" fill="none"/></svg><span class="sw" style="background:#0000ff"></span><span class="t"><span style="display:inline-block;transform-origin:0 50%;transform:scaleX(0.924);white-space:nowrap">PTK_Nuoc</span></span></div>
<div class="lrow" style="top:240px"><svg class="abs" style="left:3px;top:0px" width="76" height="16" viewBox="0 0 76 16"><circle cx="9.1" cy="5.9" r="5" fill="#f7a10c"/><path d="M7.2 11 H10.9 V13.2 Q10.9 14.6 9.05 14.6 Q7.2 14.6 7.2 13.2 Z" fill="#77777f"/><circle cx="25.5" cy="7.4" r="4.3" fill="#f7a10c"/><path d="M25.5 0 V1.8 M25.5 13 V14.8 M18.2 7.4 H20 M31 7.4 H32.8 M20.3 2.2 L21.7 3.6 M29.3 11.2 L30.7 12.6 M20.3 12.6 L21.7 11.2 M29.3 3.6 L30.7 2.2" stroke="#f7a10c" stroke-width="1.1"/><rect x="41.8" y="2.6" width="8.6" height="8.6" fill="#e9e9e9"/><path d="M39.7 3.5 V0.8 H42.8 M49.5 0.8 H52.3 V3.5 M39.7 10.5 V13.2 H42.8" stroke="#5a5a5a" stroke-width="1" fill="none"/><path d="M41.7 10.8 V2.5 H50.4 V7" stroke="#5a5a5a" stroke-width="1.1" fill="none"/><path d="M41.7 11.2 H45" stroke="#5a5a5a" stroke-width="1.1"/><circle cx="50.4" cy="11.3" r="2.3" fill="#f7a10c"/><path d="M50.4 7.3 V8.2 M50.4 14.4 V15.3 M46.4 11.3 H47.3 M53.5 11.3 H54.4 M47.6 8.5 l0.6 0.6 M52.6 13.5 l0.6 0.6 M47.6 14.1 l0.6 -0.6 M52.6 9.1 l0.6 -0.6" stroke="#f7a10c" stroke-width="0.9"/><rect x="59" y="6.2" width="10.9" height="8.4" fill="#f7a10c"/><rect x="63.9" y="9" width="1.2" height="3" fill="#fff"/><path d="M67.2 6.2 V3.6 Q67.2 1.1 69.6 1.1 Q72 1.1 72 3.6 V5.7" stroke="#f7a10c" stroke-width="1.5" fill="none"/></svg><span class="sw" style="background:#fff"></span><span class="t"><span style="display:inline-block;transform-origin:0 50%;transform:scaleX(0.877);white-space:nowrap">PTK_Text</span></span></div>
<div class="lrow" style="top:256px"><svg class="abs" style="left:3px;top:0px" width="76" height="16" viewBox="0 0 76 16"><circle cx="9.1" cy="5.9" r="5" fill="#f7a10c"/><path d="M7.2 11 H10.9 V13.2 Q10.9 14.6 9.05 14.6 Q7.2 14.6 7.2 13.2 Z" fill="#77777f"/><circle cx="25.5" cy="7.4" r="4.3" fill="#f7a10c"/><path d="M25.5 0 V1.8 M25.5 13 V14.8 M18.2 7.4 H20 M31 7.4 H32.8 M20.3 2.2 L21.7 3.6 M29.3 11.2 L30.7 12.6 M20.3 12.6 L21.7 11.2 M29.3 3.6 L30.7 2.2" stroke="#f7a10c" stroke-width="1.1"/><rect x="41.8" y="2.6" width="8.6" height="8.6" fill="#e9e9e9"/><path d="M39.7 3.5 V0.8 H42.8 M49.5 0.8 H52.3 V3.5 M39.7 10.5 V13.2 H42.8" stroke="#5a5a5a" stroke-width="1" fill="none"/><path d="M41.7 10.8 V2.5 H50.4 V7" stroke="#5a5a5a" stroke-width="1.1" fill="none"/><path d="M41.7 11.2 H45" stroke="#5a5a5a" stroke-width="1.1"/><circle cx="50.4" cy="11.3" r="2.3" fill="#f7a10c"/><path d="M50.4 7.3 V8.2 M50.4 14.4 V15.3 M46.4 11.3 H47.3 M53.5 11.3 H54.4 M47.6 8.5 l0.6 0.6 M52.6 13.5 l0.6 0.6 M47.6 14.1 l0.6 -0.6 M52.6 9.1 l0.6 -0.6" stroke="#f7a10c" stroke-width="0.9"/><rect x="59" y="6.2" width="10.9" height="8.4" fill="#f7a10c"/><rect x="63.9" y="9" width="1.2" height="3" fill="#fff"/><path d="M67.2 6.2 V3.6 Q67.2 1.1 69.6 1.1 Q72 1.1 72 3.6 V5.7" stroke="#f7a10c" stroke-width="1.5" fill="none"/></svg><span class="sw" style="background:#cc9900"></span><span class="t"><span style="display:inline-block;transform-origin:0 50%;transform:scaleX(0.918);white-space:nowrap">PTK_Thiet bi</span></span></div>
<div class="lrow" style="top:272px"><svg class="abs" style="left:3px;top:0px" width="76" height="16" viewBox="0 0 76 16"><circle cx="9.1" cy="5.9" r="5" fill="#f7a10c"/><path d="M7.2 11 H10.9 V13.2 Q10.9 14.6 9.05 14.6 Q7.2 14.6 7.2 13.2 Z" fill="#77777f"/><circle cx="25.5" cy="7.4" r="4.3" fill="#f7a10c"/><path d="M25.5 0 V1.8 M25.5 13 V14.8 M18.2 7.4 H20 M31 7.4 H32.8 M20.3 2.2 L21.7 3.6 M29.3 11.2 L30.7 12.6 M20.3 12.6 L21.7 11.2 M29.3 3.6 L30.7 2.2" stroke="#f7a10c" stroke-width="1.1"/><rect x="41.8" y="2.6" width="8.6" height="8.6" fill="#e9e9e9"/><path d="M39.7 3.5 V0.8 H42.8 M49.5 0.8 H52.3 V3.5 M39.7 10.5 V13.2 H42.8" stroke="#5a5a5a" stroke-width="1" fill="none"/><path d="M41.7 10.8 V2.5 H50.4 V7" stroke="#5a5a5a" stroke-width="1.1" fill="none"/><path d="M41.7 11.2 H45" stroke="#5a5a5a" stroke-width="1.1"/><circle cx="50.4" cy="11.3" r="2.3" fill="#f7a10c"/><path d="M50.4 7.3 V8.2 M50.4 14.4 V15.3 M46.4 11.3 H47.3 M53.5 11.3 H54.4 M47.6 8.5 l0.6 0.6 M52.6 13.5 l0.6 0.6 M47.6 14.1 l0.6 -0.6 M52.6 9.1 l0.6 -0.6" stroke="#f7a10c" stroke-width="0.9"/><rect x="59" y="6.2" width="10.9" height="8.4" fill="#f7a10c"/><rect x="63.9" y="9" width="1.2" height="3" fill="#fff"/><path d="M67.2 6.2 V3.6 Q67.2 1.1 69.6 1.1 Q72 1.1 72 3.6 V5.7" stroke="#f7a10c" stroke-width="1.5" fill="none"/></svg><span class="sw" style="background:#ff0000"></span><span class="t"><span style="display:inline-block;transform-origin:0 50%;transform:scaleX(0.866);white-space:nowrap">PTK_Truc</span></span></div>
<div class="abs" style="left:282px;top:0;width:16px;height:288px;background:#f1f1f1"><svg class="abs" style="left:4px;top:6.5px" width="8" height="5" viewBox="0 0 8 5"><path d="M0.5 4.4 L4 0.9 L7.5 4.4" stroke="#b4b4b4" stroke-width="1.2" fill="none"/></svg><svg class="abs" style="left:4px;bottom:6px" width="8" height="5" viewBox="0 0 8 5"><path d="M0.5 0.6 L4 4.1 L7.5 0.6" stroke="#b0b0b0" stroke-width="1.2" fill="none"/></svg><div class="abs" style="left:8px;top:8px;width:9px;height:29px;border:1px solid #dadada;border-right:none"></div></div>
</div>
</body></html>
